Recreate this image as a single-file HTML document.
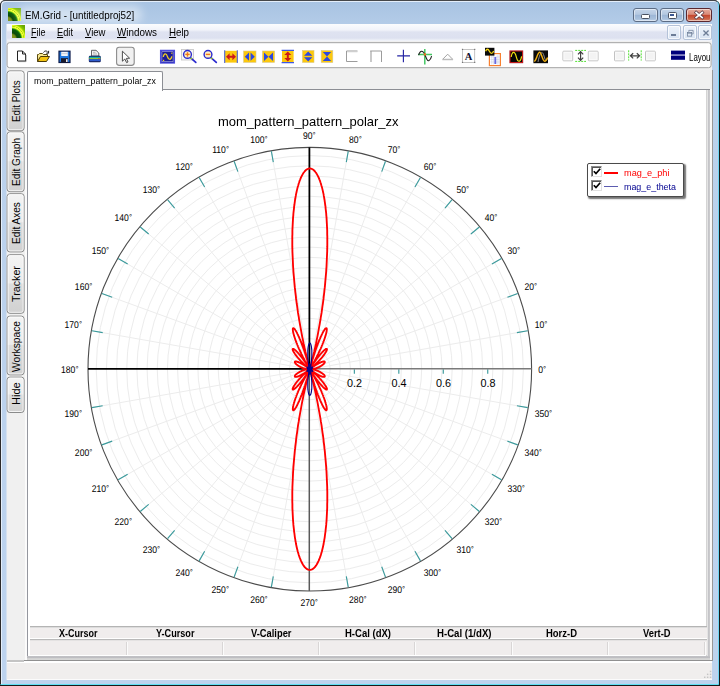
<!DOCTYPE html>
<html><head><meta charset="utf-8"><title>EM.Grid - [untitledproj52]</title>
<style>
html,body{margin:0;padding:0;}
body{width:720px;height:686px;overflow:hidden;background:#fff;font-family:"Liberation Sans",sans-serif;position:relative;}
.a{position:absolute;box-sizing:border-box;}
.t{position:absolute;white-space:nowrap;transform-origin:0 0;}
#winbg{position:absolute;left:0;top:0;width:720px;height:686px;border-radius:6px 6px 0 0;background:#1a1a1a;}
#win{position:absolute;left:0;top:0;width:717px;height:683px;border:1px solid #2c2a2a;border-top-color:#45474a;border-right-color:#6fd6f4;border-bottom-color:#5fe0f4;border-radius:5px 5px 1px 1px;
 background:linear-gradient(#a8c3e2 0px,#b4cce8 24px,#bad1ec 60px,#bdd3ee 100%);box-shadow:inset 1px 1px 0 0 #e4eefa;}
svg{position:absolute;overflow:visible;}
.vt{position:absolute;white-space:nowrap;transform-origin:0 0;font-size:10.5px;line-height:12px;color:#000;}
.sb{position:absolute;box-sizing:border-box;left:6px;width:18px;transform:translateX(0.6px);border:1px solid #8e8f8f;border-radius:3px;
 background:linear-gradient(#f3f3f3 0,#ececec 48%,#dedede 50%,#d2d2d2 100%);box-shadow:inset 0 0 0 1px rgba(255,255,255,.8);}
</style></head><body>
<div id="winbg"></div><div id="win"></div>

<div class="a" style="left:8px;top:8px;width:13px;height:13px;background:radial-gradient(17px circle at -4% 104%,#8a9a20 0,#7a8e18 24%,#0a4a0a 34%,#0c5a0c 53%,#2c9c10 58%,#dff820 64%,#f8ff44 69%,#a4dc00 72%,#f0ff34 76%,#d0f010 80%,#88c800 86%,#6aa800 100%);"></div>
<div class="a" style="left:18px;top:6px;width:124px;height:17px;border-radius:8px;background:rgba(255,255,255,.45);filter:blur(4px);"></div>
<span class="t" style="left:24.80px;top:9.04px;font-size:11px;line-height:12.639px;color:#000;transform:scaleX(0.8931);">EM.Grid - [untitledproj52]</span>
<div class="a" style="left:632.6px;top:7.8px;width:25px;height:13.8px;border:1px solid #5c6c84;border-radius:3px;background:linear-gradient(#c6d6ea 0,#b4c8e0 45%,#9cb6d6 50%,#a8c0dc 80%,#bcd0e8 100%);box-shadow:inset 0 0 0 1px rgba(255,255,255,.5);"></div>
<div class="a" style="left:659.8px;top:7.8px;width:24.6px;height:13.8px;border:1px solid #5c6c84;border-radius:3px;background:linear-gradient(#c6d6ea 0,#b4c8e0 45%,#9cb6d6 50%,#a8c0dc 80%,#bcd0e8 100%);box-shadow:inset 0 0 0 1px rgba(255,255,255,.5);"></div>
<div class="a" style="left:686.4px;top:7.8px;width:25.2px;height:13.8px;border:1px solid #5a2830;border-radius:3px;background:linear-gradient(#e6ac9e 0,#d98a78 45%,#c4442c 50%,#cc6448 80%,#d88468 100%);box-shadow:inset 0 0 0 1px rgba(255,255,255,.5);"></div>
<div class="a" style="left:640.5px;top:14.4px;width:9.6px;height:4.2px;background:#fff;border:1px solid #4a5262;border-radius:1.5px;"></div>
<div class="a" style="left:668px;top:11.5px;width:9px;height:7px;background:#fff;border:1px solid #4a5262;border-radius:1.5px;"></div>
<div class="a" style="left:670.4px;top:13.8px;width:3.8px;height:2.2px;background:#3c5a94;"></div>
<svg style="left:694px;top:10px" width="10" height="9" viewBox="0 0 10 9"><path d="M2.2 2.6 L8.2 7.6 M8.2 2.6 L2.2 7.6" stroke="#5a3b46" stroke-width="3.2" stroke-linecap="square"/><path d="M2.2 2.6 L8.2 7.6 M8.2 2.6 L2.2 7.6" stroke="#fff" stroke-width="1.8" stroke-linecap="square"/></svg>
<div class="a" style="left:6px;top:24px;width:1px;height:656px;background:#d6e1ef;"></div>
<div class="a" style="left:7px;top:24px;width:705px;height:656px;background:#f0f0f0;"></div>
<div class="a" style="left:7px;top:24px;width:705px;height:17px;background:linear-gradient(#fbfcfe 0,#f1f3fa 6px,#dfe3f1 8px,#dde1f0 14px,#eceff7 16px,#f4f6fb 17px);"></div>
<div class="a" style="left:12px;top:25px;width:13px;height:13px;background:radial-gradient(17px circle at -4% 104%,#8a9a20 0,#7a8e18 24%,#0a4a0a 34%,#0c5a0c 53%,#2c9c10 58%,#dff820 64%,#f8ff44 69%,#a4dc00 72%,#f0ff34 76%,#d0f010 80%,#88c800 86%,#6aa800 100%);"></div>
<span class="t" style="left:31.20px;top:26.05px;font-size:11px;line-height:12.639px;color:#000;transform:scaleX(0.8187);"><u>F</u>ile</span>
<span class="t" style="left:57.20px;top:26.05px;font-size:11px;line-height:12.639px;color:#000;transform:scaleX(0.8432);"><u>E</u>dit</span>
<span class="t" style="left:84.50px;top:26.05px;font-size:11px;line-height:12.639px;color:#000;transform:scaleX(0.8668);"><u>V</u>iew</span>
<span class="t" style="left:116.70px;top:26.05px;font-size:11px;line-height:12.639px;color:#000;transform:scaleX(0.8968);"><u>W</u>indows</span>
<span class="t" style="left:168.50px;top:26.05px;font-size:11px;line-height:12.639px;color:#000;transform:scaleX(0.8848);"><u>H</u>elp</span>
<div class="a" style="left:667.2px;top:25px;width:14.2px;height:14.8px;border:1px solid #b4c2d8;border-radius:2px;background:linear-gradient(#eef3fa,#d8e3f2);box-shadow:inset 0 0 0 1px rgba(255,255,255,.7);"></div>
<div class="a" style="left:683px;top:25px;width:13.8px;height:14.8px;border:1px solid #b4c2d8;border-radius:2px;background:linear-gradient(#eef3fa,#d8e3f2);box-shadow:inset 0 0 0 1px rgba(255,255,255,.7);"></div>
<div class="a" style="left:698px;top:25px;width:14.2px;height:14.8px;border:1px solid #b4c2d8;border-radius:2px;background:linear-gradient(#eef3fa,#d8e3f2);box-shadow:inset 0 0 0 1px rgba(255,255,255,.7);"></div>
<div class="a" style="left:671px;top:34px;width:5px;height:2px;background:#6c7c96;"></div>
<svg style="left:686.5px;top:29.5px" width="6.5" height="6.5" viewBox="0 0 9 9" fill="none" stroke="#6c7c96" stroke-width="1"><path d="M2.5 2.5V0.5H8.5V5.5H6.5"/><rect x="0.5" y="3.5" width="6" height="5"/><path d="M0.5 4.5H6.5"/></svg>
<svg style="left:702.5px;top:30px" width="6" height="6" viewBox="0 0 7 7"><path d="M0.5 0.5 L6.5 6.5 M6.5 0.5 L0.5 6.5" stroke="#6c7c96" stroke-width="1.5"/></svg>
<div class="a" style="left:6px;top:42px;width:705.4px;height:26.4px;background:#fff;border:1px solid #a2a2a2;border-radius:3px;transform:translate(0.6px,0.2px);"></div>
<svg style="left:0;top:0" width="720" height="80" viewBox="0 0 720 80">
<path d="M17.5 51 H22.5 L25.5 54 V61 H17.5 Z" fill="#fff" stroke="#222" stroke-width="1"/><path d="M22.5 51 V54 H25.5" fill="none" stroke="#222" stroke-width="1"/>
<path d="M18 61.6 H26 V55" fill="none" stroke="#777" stroke-width="0.8"/>
<path d="M37.5 61.5 V54.5 H38.5 L39.5 53.5 H42.5 L43.5 54.5 H47.5 V56.5" fill="#f8e890" stroke="#5a4a10" stroke-width="1"/>
<path d="M37.5 61.5 L40.5 56.5 H49.5 L46.5 61.5 Z" fill="#f4c410" stroke="#4a3a08" stroke-width="1"/>
<path d="M43.5 52.5 C44.5 50.5 47 50.5 48 52.5 M48.6 50.8 V53.2 H46.2" fill="none" stroke="#222" stroke-width="1"/>
<rect x="59" y="51.2" width="11" height="11.3" fill="#1e78e0" stroke="#0a1a4a" stroke-width="1.2"/>
<rect x="61.2" y="51.8" width="6.6" height="4.2" fill="#f2f4f8"/><path d="M61.2 53.6 H67.8" stroke="#b8c0d0" stroke-width="0.7"/>
<rect x="61" y="58.2" width="7" height="4.3" fill="#1a1a2a"/><rect x="66" y="59.2" width="1.6" height="2.8" fill="#e8e8f0"/>
<path d="M91.5 56 V50.3 H96 L98.8 53 V56 Z" fill="#f4f4f4" stroke="#555" stroke-width="0.9"/><path d="M93 52.3 H95.5 M93 54 H97" stroke="#999" stroke-width="0.7"/>
<rect x="88.8" y="55.8" width="12" height="6.4" rx="1.2" fill="#1a2a6a"/>
<rect x="89.3" y="56.8" width="11" height="1.6" fill="#18b0a8"/><rect x="89.3" y="58.2" width="11" height="1" fill="#b8e020"/><rect x="98.2" y="58.1" width="1.4" height="1.1" fill="#e05020"/>
<rect x="89.3" y="59.2" width="11" height="1.7" fill="#3060d8"/>
<rect x="116.6" y="47.2" width="17.6" height="18.2" rx="2.6" fill="#f1f1f1" stroke="#8b8b8b" stroke-width="1.1"/>
<path d="M122.4 51.2 V61.2 L124.8 59 L126.6 62.6 L128 61.9 L126.3 58.4 L129.6 58.2 Z" fill="#fff" stroke="#3a3a3a" stroke-width="0.9" stroke-linejoin="round"/>
<rect x="160.6" y="50.4" width="13.8" height="12.6" fill="#1c1c94" stroke="#4a4adc" stroke-width="1.3"/><rect x="161.9" y="51.7" width="11.2" height="10" fill="none" stroke="#b8b8ee" stroke-width="0.6"/>
<path d="M163.3 57 C164 53 166.3 53 167.5 56.7 C168.7 60.4 171 60.4 171.8 56.4" fill="none" stroke="#f0d020" stroke-width="1.3"/>
<rect x="171.2" y="52.6" width="1.2" height="1.2" fill="#f0d020"/><rect x="163" y="59.8" width="1.2" height="1.2" fill="#f0d020"/>
<rect x="181.4" y="49.4" width="12.2" height="10.6" fill="#f6f6f6" stroke="#c4c4c4" stroke-width="0.8"/>
<path d="M190.7 57.8 L195.8 62.4" stroke="#2a2ad0" stroke-width="1.7" stroke-linecap="round"/>
<path d="M190.3 57.4 L191.9 58.9" stroke="#a0d020" stroke-width="1.4"/>
<circle cx="187.5" cy="54.4" r="3.9" fill="#fff0c4" stroke="#2a2ad0" stroke-width="1.4"/>
<path d="M185.3 54.4 H189.7" stroke="#f07818" stroke-width="1.4"/>
<path d="M187.5 52.2 V56.6" stroke="#f07818" stroke-width="1.4"/>
<path d="M211.2 57.8 L216.3 62.4" stroke="#2a2ad0" stroke-width="1.7" stroke-linecap="round"/>
<path d="M210.8 57.4 L212.4 58.9" stroke="#a0d020" stroke-width="1.4"/>
<circle cx="208.0" cy="54.4" r="3.9" fill="#fff0c4" stroke="#2a2ad0" stroke-width="1.4"/>
<path d="M205.8 54.4 H210.2" stroke="#f07818" stroke-width="1.4"/>
<rect x="224.2" y="50.8" width="13.6" height="11.8" fill="#fcc80c"/><path d="M224.7 50.3 V63 M237.3 50.3 V63" stroke="#4a66ea" stroke-width="1.1"/>
<path d="M226 56.7 L229.6 53.2 V55.7 H232.4 V53.2 L236 56.7 L232.4 60.2 V57.7 H229.6 V60.2 Z" fill="#cc1818"/>
<rect x="243.6" y="51" width="12.4" height="11.4" fill="#fcc80c" stroke="#d8c890" stroke-width="0.6"/>
<path d="M244.8 56.7 L249 52.6 V60.8 Z M254.8 56.7 L250.6 52.6 V60.8 Z" fill="#2c48e0"/>
<rect x="262.4" y="51" width="12.2" height="11.4" fill="#fcc80c" stroke="#d8c890" stroke-width="0.6"/>
<path d="M264 52.4 L268.5 56.7 L264 61 Z M273 52.4 L268.5 56.7 L273 61 Z" fill="#2c48e0"/>
<rect x="282" y="50.4" width="11.6" height="12.2" fill="#fcc80c"/><path d="M281.6 50.4 H294 M281.6 62.6 H294" stroke="#3c58e6" stroke-width="1.1"/>
<path d="M287.8 51.4 L291.3 55 H288.8 V58 H291.3 L287.8 61.6 L284.3 58 H286.8 V55 H284.3 Z" fill="#cc1818"/>
<rect x="302.4" y="50.5" width="11.6" height="12" fill="#fcc80c" stroke="#d8c890" stroke-width="0.6"/>
<path d="M308.2 51.6 L312.4 55.7 H304 Z M308.2 61.4 L312.4 57.3 H304 Z" fill="#2c48e0"/>
<rect x="321.2" y="50.5" width="11.6" height="12" fill="#fcc80c" stroke="#d8c890" stroke-width="0.6"/>
<path d="M322.8 52 H331.2 L327 56.5 Z M322.8 61 H331.2 L327 56.5 Z" fill="#2c48e0"/>
<path d="M357.5 51 H346.5 V61.5 H357.5" fill="none" stroke="#9c9c9c" stroke-width="1"/><path d="M347 51.8 H357.5" stroke="#d0d0d0" stroke-width="0.8"/>
<path d="M371 62 V51" stroke="#c4c4c4" stroke-width="1.8"/><path d="M370.2 51 H381.5 V62" fill="none" stroke="#9c9c9c" stroke-width="1"/>
<path d="M403.4 49.8 V62.2 M397.2 55.9 H410" stroke="#2424a4" stroke-width="1.15"/>
<path d="M424.8 49 V64.4 M418 54.4 H432" stroke="#44c864" stroke-width="1.5"/>
<path d="M418.6 55.2 C420 50 423 50 424.8 54.4 C426.5 58.8 427.5 61.4 429 60.6 C430.4 59.8 431.2 57.8 431.6 56.2" fill="none" stroke="#222" stroke-width="1.1"/>
<rect x="423.8" y="53.3" width="2.2" height="2.2" fill="#f07820"/>
<path d="M442.8 59.2 L447.7 54.2 L452.6 59.2" fill="none" stroke="#a4a4a4" stroke-width="1"/><path d="M442.4 59.5 H453" stroke="#bcbcbc" stroke-width="1.5"/>
<rect x="462.5" y="49.4" width="12.2" height="13" fill="#fff" stroke="#b4b4b4" stroke-width="0.8"/>
<rect x="461.9" y="48.8" width="1.2" height="1.2" fill="#777"/>
<rect x="474.09999999999997" y="48.8" width="1.2" height="1.2" fill="#777"/>
<rect x="461.9" y="61.8" width="1.2" height="1.2" fill="#777"/>
<rect x="474.09999999999997" y="61.8" width="1.2" height="1.2" fill="#777"/>
<text x="468.6" y="60" font-family="Liberation Serif, serif" font-weight="bold" font-size="10.5" text-anchor="middle" fill="#101030">A</text>
<rect x="489.4" y="53.6" width="11" height="12" fill="#fff" stroke="#f88030" stroke-width="1.2"/>
<path d="M491.8 55 V64.5 M493.6 55 V64.5 M497.2 55 V64.5 M499 55 V64.5 M490.5 57 H500 M490.5 59.5 H500 M490.5 62 H500" stroke="#d0d4e8" stroke-width="0.7"/>
<rect x="494.4" y="57" width="1.8" height="7" fill="#6868e0"/>
<rect x="485" y="47.8" width="9.4" height="7.8" fill="#0a0a0a"/>
<path d="M485.6 51.2 C486.6 48.6 488.2 48.6 489.4 51.2 C490.6 53.8 492.4 54.4 493.6 51" fill="none" stroke="#f0d010" stroke-width="1.3"/>
<rect x="509.3" y="50.3" width="14" height="13" fill="#c8dcec"/><rect x="510" y="51" width="12.6" height="11.6" fill="#050505" stroke="#c81818" stroke-width="1.1"/>
<path d="M511.2 57 C512.2 50.8 514.8 50.8 516.3 56.8 C517.8 62.8 520.4 62.8 521.6 56.4" fill="none" stroke="#f0e010" stroke-width="1.2"/>
<rect x="533.4" y="50.4" width="14.6" height="12.8" fill="#0a0a0a"/>
<path d="M538 62 C540 52 542.5 50 544 56 C545.5 62 546.8 61 547.6 58" fill="none" stroke="#8c8c8c" stroke-width="1"/>
<path d="M534.2 61.4 C536.6 60 537.6 52.2 539.6 52.2 C541.6 52.2 542.4 61.2 544.6 61.2 C546 61.2 547 59 547.6 57.4" fill="none" stroke="#f0b010" stroke-width="1.4"/>
<rect x="562.9" y="51.2" width="9.8" height="9.6" rx="0.8" fill="#f3f3f3" stroke="#c2c2c2" stroke-width="1"/><rect x="564.0" y="52.3" width="7.6" height="7.4" fill="none" stroke="#fafafa" stroke-width="1"/>
<rect x="588.3" y="51.2" width="9.8" height="9.6" rx="0.8" fill="#f3f3f3" stroke="#c2c2c2" stroke-width="1"/><rect x="589.4" y="52.3" width="7.6" height="7.4" fill="none" stroke="#fafafa" stroke-width="1"/>
<rect x="614.5" y="51.2" width="9.8" height="9.6" rx="0.8" fill="#f3f3f3" stroke="#c2c2c2" stroke-width="1"/><rect x="615.6" y="52.3" width="7.6" height="7.4" fill="none" stroke="#fafafa" stroke-width="1"/>
<rect x="645.5" y="51.2" width="9.8" height="9.6" rx="0.8" fill="#f3f3f3" stroke="#c2c2c2" stroke-width="1"/><rect x="646.6" y="52.3" width="7.6" height="7.4" fill="none" stroke="#fafafa" stroke-width="1"/>
<path d="M575.2 50.4 H586 M575.2 61.4 H586" stroke="#50e030" stroke-width="1" stroke-dasharray="2 1"/>
<path d="M580.6 52 V60 M578 54.4 L580.6 51.6 L583.2 54.4 M578 57.6 L580.6 60.4 L583.2 57.6" fill="none" stroke="#404040" stroke-width="1.2"/>
<path d="M628.7 50.3 V60.6 M641.2 50.3 V60.6" stroke="#50e030" stroke-width="1" stroke-dasharray="2 1"/>
<path d="M630.6 55.8 H639.4 M633.2 53.2 L630.4 55.8 L633.2 58.4 M636.8 53.2 L639.6 55.8 L636.8 58.4" fill="none" stroke="#404040" stroke-width="1.2"/>
<rect x="671" y="50.6" width="14" height="9.2" fill="#00007c"/><rect x="671" y="54.2" width="14" height="1" fill="#8888c8"/><rect x="671" y="55.2" width="14" height="0.6" fill="#d0d0ec"/>
</svg>
<div class="a" style="left:686px;top:46px;width:24.2px;height:20px;overflow:hidden;"><span class="t" style="left:2.90px;top:4.74px;font-size:11px;line-height:12.639px;color:#000;transform:scaleX(0.7165);">Layout</span></div>
<svg style="left:0;top:0" width="0" height="0"><defs><linearGradient id="sbg" x1="0" y1="0" x2="0" y2="1"><stop offset="0" stop-color="#f3f3f3"/><stop offset="0.48" stop-color="#ebebeb"/><stop offset="0.5" stop-color="#dddddd"/><stop offset="1" stop-color="#d1d1d1"/></linearGradient></defs></svg>
<svg style="left:0;top:0" width="30" height="420"><rect x="7.1" y="70.9" width="17" height="59.8" rx="2.8" fill="url(#sbg)" stroke="#8a8b8b" stroke-width="1"/><rect x="8.1" y="71.9" width="15" height="57.8" rx="2" fill="none" stroke="rgba(255,255,255,.75)" stroke-width="1"/></svg>
<span class="vt" style="left:10.10px;top:122.20px;transform:rotate(-90deg) scaleX(0.9377);">Edit Plots</span>
<svg style="left:0;top:0" width="30" height="420"><rect x="7.1" y="131.9" width="17" height="59.8" rx="2.8" fill="url(#sbg)" stroke="#8a8b8b" stroke-width="1"/><rect x="8.1" y="132.9" width="15" height="57.8" rx="2" fill="none" stroke="rgba(255,255,255,.75)" stroke-width="1"/></svg>
<span class="vt" style="left:10.10px;top:185.80px;transform:rotate(-90deg) scaleX(0.9564);">Edit Graph</span>
<svg style="left:0;top:0" width="30" height="420"><rect x="7.1" y="193.7" width="17" height="58.2" rx="2.8" fill="url(#sbg)" stroke="#8a8b8b" stroke-width="1"/><rect x="8.1" y="194.7" width="15" height="56.2" rx="2" fill="none" stroke="rgba(255,255,255,.75)" stroke-width="1"/></svg>
<span class="vt" style="left:10.10px;top:243.80px;transform:rotate(-90deg) scaleX(0.9547);">Edit Axes</span>
<svg style="left:0;top:0" width="30" height="420"><rect x="7.1" y="254.7" width="17" height="58.6" rx="2.8" fill="url(#sbg)" stroke="#8a8b8b" stroke-width="1"/><rect x="8.1" y="255.7" width="15" height="56.6" rx="2" fill="none" stroke="rgba(255,255,255,.75)" stroke-width="1"/></svg>
<span class="vt" style="left:10.10px;top:302.10px;transform:rotate(-90deg) scaleX(1.0206);">Tracker</span>
<svg style="left:0;top:0" width="30" height="420"><rect x="7.1" y="316.1" width="17" height="58.8" rx="2.8" fill="url(#sbg)" stroke="#8a8b8b" stroke-width="1"/><rect x="8.1" y="317.1" width="15" height="56.8" rx="2" fill="none" stroke="rgba(255,255,255,.75)" stroke-width="1"/></svg>
<span class="vt" style="left:10.10px;top:372.40px;transform:rotate(-90deg) scaleX(0.9744);">Workspace</span>
<svg style="left:0;top:0" width="30" height="420"><rect x="7.1" y="377.1" width="17" height="35.4" rx="2.8" fill="url(#sbg)" stroke="#8a8b8b" stroke-width="1"/><rect x="8.1" y="378.1" width="15" height="33.4" rx="2" fill="none" stroke="rgba(255,255,255,.75)" stroke-width="1"/></svg>
<span class="vt" style="left:10.10px;top:405.40px;transform:rotate(-90deg) scaleX(1.0474);">Hide</span>
<div class="a" style="left:24.5px;top:71px;width:2.5px;height:589px;background:#fbfbfb;"></div>
<div class="a" style="left:27px;top:89px;width:683px;height:571px;background:#fff;border-left:1px solid #94969e;border-top:1px solid #8c8e94;"></div>
<div class="a" style="left:706px;top:90px;width:4px;height:570px;background:linear-gradient(90deg,#d4d4d4 0,#d4d4d4 25%,#e4e4e4 25%,#e4e4e4 50%,#c4c4c8 50%,#c4c4c8 75%,#cacacc 75%);"></div>
<div class="a" style="left:710px;top:89px;width:2px;height:571px;background:#f8f8f8;"></div>
<div class="a" style="left:712px;top:70px;width:1px;height:591px;background:#989898;"></div>
<div class="a" style="left:27px;top:656px;width:683px;height:4px;background:linear-gradient(#c2c2c6 0,#bcbcc0 50%,#d0d0d0 50%,#d8d8d8 100%);"></div>
<div class="a" style="left:27px;top:71px;width:136px;height:20px;background:#fff;border:1px solid #8c8e94;border-bottom:none;border-radius:2px 2px 0 0;"></div>
<span class="t" style="left:33.75px;top:74.82px;font-size:9.7px;line-height:11.145px;color:#000;transform:scaleX(0.9052);">mom_pattern_pattern_polar_zx</span>
<div class="a" style="left:30px;top:626px;width:677px;height:28.5px;background:#f0eded;"></div>
<div class="a" style="left:30px;top:626px;width:677px;height:2px;background:linear-gradient(#b4b4b4 0,#b4b4b4 50%,#dcdcdc 50%);"></div>
<div class="a" style="left:30px;top:638px;width:677px;height:3px;background:linear-gradient(#fff 0,#fff 33%,#b9b9b9 33%,#b9b9b9 66%,#e4e2e2 66%);"></div>
<span class="t" style="left:59.00px;top:627.10px;font-size:10.5px;line-height:12.065px;color:#000;font-weight:bold;transform:scaleX(0.8567);">X-Cursor</span>
<span class="t" style="left:156.00px;top:627.10px;font-size:10.5px;line-height:12.065px;color:#000;font-weight:bold;transform:scaleX(0.8679);">Y-Cursor</span>
<span class="t" style="left:251.00px;top:627.10px;font-size:10.5px;line-height:12.065px;color:#000;font-weight:bold;transform:scaleX(0.8898);">V-Caliper</span>
<span class="t" style="left:345.00px;top:627.10px;font-size:10.5px;line-height:12.065px;color:#000;font-weight:bold;transform:scaleX(0.9061);">H-Cal (dX)</span>
<span class="t" style="left:437.00px;top:627.10px;font-size:10.5px;line-height:12.065px;color:#000;font-weight:bold;transform:scaleX(0.9162);">H-Cal (1/dX)</span>
<span class="t" style="left:545.50px;top:627.10px;font-size:10.5px;line-height:12.065px;color:#000;font-weight:bold;transform:scaleX(0.9015);">Horz-D</span>
<span class="t" style="left:643.00px;top:627.10px;font-size:10.5px;line-height:12.065px;color:#000;font-weight:bold;transform:scaleX(0.8893);">Vert-D</span>
<div class="a" style="left:126px;top:642px;width:2px;height:13px;background:linear-gradient(90deg,#d9d6d6 50%,#fbfbfb 50%);"></div>
<div class="a" style="left:222px;top:642px;width:2px;height:13px;background:linear-gradient(90deg,#d9d6d6 50%,#fbfbfb 50%);"></div>
<div class="a" style="left:318px;top:642px;width:2px;height:13px;background:linear-gradient(90deg,#d9d6d6 50%,#fbfbfb 50%);"></div>
<div class="a" style="left:414px;top:642px;width:2px;height:13px;background:linear-gradient(90deg,#d9d6d6 50%,#fbfbfb 50%);"></div>
<div class="a" style="left:511px;top:642px;width:2px;height:13px;background:linear-gradient(90deg,#d9d6d6 50%,#fbfbfb 50%);"></div>
<div class="a" style="left:607px;top:642px;width:2px;height:13px;background:linear-gradient(90deg,#d9d6d6 50%,#fbfbfb 50%);"></div>
<div class="a" style="left:704px;top:642px;width:2px;height:13px;background:linear-gradient(90deg,#d9d6d6 50%,#fbfbfb 50%);"></div>
<div class="a" style="left:7px;top:660px;width:705px;height:20px;background:#f0eeed;border-top:1px solid #909090;box-shadow:inset 0 2px 0 #fff,inset 0 -1px 0 #fbfbfb;"></div><div class="a" style="left:7px;top:660px;width:17px;height:1.5px;background:#c4c4c4;"></div>
<svg style="left:704px;top:670px" width="8" height="8" viewBox="0 0 11 11" fill="#c4c4c4"><rect x="8" y="1" width="2" height="2"/><rect x="4" y="5" width="2" height="2"/><rect x="8" y="5" width="2" height="2"/><rect x="0" y="9" width="2" height="2"/><rect x="4" y="9" width="2" height="2"/><rect x="8" y="9" width="2" height="2"/></svg>
<svg style="left:0;top:0" width="720" height="686" viewBox="0 0 720 686" font-family="Liberation Sans, sans-serif">
<g fill="none" stroke="#ececec" stroke-width="1">
<circle cx="309.8" cy="369.2" r="10.17"/>
<circle cx="309.8" cy="369.2" r="20.34"/>
<circle cx="309.8" cy="369.2" r="30.51"/>
<circle cx="309.8" cy="369.2" r="40.68"/>
<circle cx="309.8" cy="369.2" r="50.85"/>
<circle cx="309.8" cy="369.2" r="61.02"/>
<circle cx="309.8" cy="369.2" r="71.19"/>
<circle cx="309.8" cy="369.2" r="81.36"/>
<circle cx="309.8" cy="369.2" r="91.53"/>
<circle cx="309.8" cy="369.2" r="101.70"/>
<circle cx="309.8" cy="369.2" r="111.87"/>
<circle cx="309.8" cy="369.2" r="122.04"/>
<circle cx="309.8" cy="369.2" r="132.21"/>
<circle cx="309.8" cy="369.2" r="142.38"/>
<circle cx="309.8" cy="369.2" r="152.55"/>
<circle cx="309.8" cy="369.2" r="162.72"/>
<circle cx="309.8" cy="369.2" r="172.89"/>
<circle cx="309.8" cy="369.2" r="183.06"/>
<circle cx="309.8" cy="369.2" r="193.23"/>
<circle cx="309.8" cy="369.2" r="203.40"/>
<circle cx="309.8" cy="369.2" r="213.57"/>
<line x1="309.8" y1="369.2" x2="528.23" y2="330.68"/>
<line x1="309.8" y1="369.2" x2="518.22" y2="293.34"/>
<line x1="309.8" y1="369.2" x2="501.88" y2="258.30"/>
<line x1="309.8" y1="369.2" x2="479.71" y2="226.63"/>
<line x1="309.8" y1="369.2" x2="452.37" y2="199.29"/>
<line x1="309.8" y1="369.2" x2="420.70" y2="177.12"/>
<line x1="309.8" y1="369.2" x2="385.66" y2="160.78"/>
<line x1="309.8" y1="369.2" x2="348.32" y2="150.77"/>
<line x1="309.8" y1="369.2" x2="271.28" y2="150.77"/>
<line x1="309.8" y1="369.2" x2="233.94" y2="160.78"/>
<line x1="309.8" y1="369.2" x2="198.90" y2="177.12"/>
<line x1="309.8" y1="369.2" x2="167.23" y2="199.29"/>
<line x1="309.8" y1="369.2" x2="139.89" y2="226.63"/>
<line x1="309.8" y1="369.2" x2="117.72" y2="258.30"/>
<line x1="309.8" y1="369.2" x2="101.38" y2="293.34"/>
<line x1="309.8" y1="369.2" x2="91.37" y2="330.68"/>
<line x1="309.8" y1="369.2" x2="91.37" y2="407.72"/>
<line x1="309.8" y1="369.2" x2="101.38" y2="445.06"/>
<line x1="309.8" y1="369.2" x2="117.72" y2="480.10"/>
<line x1="309.8" y1="369.2" x2="139.89" y2="511.77"/>
<line x1="309.8" y1="369.2" x2="167.23" y2="539.11"/>
<line x1="309.8" y1="369.2" x2="198.90" y2="561.28"/>
<line x1="309.8" y1="369.2" x2="233.94" y2="577.62"/>
<line x1="309.8" y1="369.2" x2="271.28" y2="587.63"/>
<line x1="309.8" y1="369.2" x2="348.32" y2="587.63"/>
<line x1="309.8" y1="369.2" x2="385.66" y2="577.62"/>
<line x1="309.8" y1="369.2" x2="420.70" y2="561.28"/>
<line x1="309.8" y1="369.2" x2="452.37" y2="539.11"/>
<line x1="309.8" y1="369.2" x2="479.71" y2="511.77"/>
<line x1="309.8" y1="369.2" x2="501.88" y2="480.10"/>
<line x1="309.8" y1="369.2" x2="518.22" y2="445.06"/>
<line x1="309.8" y1="369.2" x2="528.23" y2="407.72"/>
</g>
<circle cx="309.8" cy="369.2" r="221.8" fill="none" stroke="#4c4c4c" stroke-width="1.1"/>
<g stroke="#3a9a9c" stroke-width="1.15">
<line x1="516.91" y1="332.68" x2="527.74" y2="330.77"/>
<line x1="507.42" y1="297.27" x2="517.75" y2="293.51"/>
<line x1="491.93" y1="264.05" x2="501.45" y2="258.55"/>
<line x1="470.90" y1="234.02" x2="479.33" y2="226.95"/>
<line x1="444.98" y1="208.10" x2="452.05" y2="199.67"/>
<line x1="414.95" y1="187.07" x2="420.45" y2="177.55"/>
<line x1="381.73" y1="171.58" x2="385.49" y2="161.25"/>
<line x1="346.32" y1="162.09" x2="348.23" y2="151.26"/>
<line x1="273.28" y1="162.09" x2="271.37" y2="151.26"/>
<line x1="237.87" y1="171.58" x2="234.11" y2="161.25"/>
<line x1="204.65" y1="187.07" x2="199.15" y2="177.55"/>
<line x1="174.62" y1="208.10" x2="167.55" y2="199.67"/>
<line x1="148.70" y1="234.02" x2="140.27" y2="226.95"/>
<line x1="127.67" y1="264.05" x2="118.15" y2="258.55"/>
<line x1="112.18" y1="297.27" x2="101.85" y2="293.51"/>
<line x1="102.69" y1="332.68" x2="91.86" y2="330.77"/>
<line x1="102.69" y1="405.72" x2="91.86" y2="407.63"/>
<line x1="112.18" y1="441.13" x2="101.85" y2="444.89"/>
<line x1="127.67" y1="474.35" x2="118.15" y2="479.85"/>
<line x1="148.70" y1="504.38" x2="140.27" y2="511.45"/>
<line x1="174.62" y1="530.30" x2="167.55" y2="538.73"/>
<line x1="204.65" y1="551.33" x2="199.15" y2="560.85"/>
<line x1="237.87" y1="566.82" x2="234.11" y2="577.15"/>
<line x1="273.28" y1="576.31" x2="271.37" y2="587.14"/>
<line x1="346.32" y1="576.31" x2="348.23" y2="587.14"/>
<line x1="381.73" y1="566.82" x2="385.49" y2="577.15"/>
<line x1="414.95" y1="551.33" x2="420.45" y2="560.85"/>
<line x1="444.98" y1="530.30" x2="452.05" y2="538.73"/>
<line x1="470.90" y1="504.38" x2="479.33" y2="511.45"/>
<line x1="491.93" y1="474.35" x2="501.45" y2="479.85"/>
<line x1="507.42" y1="441.13" x2="517.75" y2="444.89"/>
<line x1="516.91" y1="405.72" x2="527.74" y2="407.63"/>
<line x1="354.36" y1="369.2" x2="354.36" y2="373.7"/>
<line x1="398.82" y1="369.2" x2="398.82" y2="373.7"/>
<line x1="443.28" y1="369.2" x2="443.28" y2="373.7"/>
<line x1="487.74" y1="369.2" x2="487.74" y2="373.7"/>
</g>
<line x1="309.8" y1="368.75" x2="531.6" y2="368.75" stroke="#7a7a7a" stroke-width="1.6"/>
<line x1="309.3" y1="369.2" x2="309.3" y2="591.0" stroke="#5a5a5a" stroke-width="1.5"/>
<line x1="88.0" y1="368.8" x2="309.8" y2="368.8" stroke="#000" stroke-width="1.8"/>
<line x1="309.40000000000003" y1="147.39999999999998" x2="309.40000000000003" y2="369.2" stroke="#000" stroke-width="1.8"/>
<polyline fill="none" stroke="#ff0000" stroke-width="1.85" stroke-linejoin="round" points="309.8,369.2 310.4,369.2 310.7,369.2 310.9,369.2 311.0,369.2 311.2,369.2 311.3,369.2 311.4,369.2 311.5,369.2 311.7,369.2 311.8,369.2 311.9,369.2 312.0,369.1 312.0,369.1 312.1,369.1 312.2,369.1 312.3,369.1 312.4,369.1 312.5,369.1 312.5,369.1 312.6,369.1 312.7,369.1 312.8,369.1 312.8,369.0 312.9,369.0 313.0,369.0 313.0,369.0 313.1,369.0 313.2,369.0 313.2,369.0 313.3,369.0 313.4,369.0 313.4,368.9 313.5,368.9 313.6,368.9 313.6,368.9 313.7,368.9 313.8,368.9 313.8,368.9 313.9,368.8 314.0,368.8 314.0,368.8 314.1,368.8 314.2,368.8 314.2,368.8 314.3,368.8 314.4,368.7 314.4,368.7 314.5,368.7 314.6,368.7 314.6,368.7 314.7,368.7 314.8,368.6 314.8,368.6 314.9,368.6 315.0,368.6 315.0,368.6 315.1,368.5 315.2,368.5 315.2,368.5 315.3,368.5 315.4,368.5 315.4,368.4 315.5,368.4 315.6,368.4 315.6,368.4 315.7,368.3 315.8,368.3 315.9,368.3 315.9,368.3 316.0,368.2 316.1,368.2 316.1,368.2 316.2,368.2 316.3,368.1 316.4,368.1 316.4,368.1 316.5,368.1 316.6,368.0 316.7,368.0 316.7,368.0 316.8,367.9 316.9,367.9 317.0,367.9 317.0,367.9 317.1,367.8 317.2,367.8 317.3,367.8 317.4,367.7 317.4,367.7 317.5,367.7 317.6,367.6 317.7,367.6 317.7,367.6 317.8,367.5 317.9,367.5 318.0,367.5 318.1,367.4 318.2,367.4 318.2,367.3 318.3,367.3 318.4,367.3 318.5,367.2 318.6,367.2 318.6,367.2 318.7,367.1 318.8,367.1 318.9,367.0 319.0,367.0 319.1,367.0 319.1,366.9 319.2,366.9 319.3,366.8 319.4,366.8 319.5,366.7 319.6,366.7 319.7,366.7 319.7,366.6 319.8,366.6 319.9,366.5 320.0,366.5 320.1,366.4 320.2,366.4 320.2,366.3 320.3,366.3 320.4,366.2 320.5,366.2 320.6,366.1 320.7,366.1 320.8,366.0 320.8,366.0 320.9,365.9 321.0,365.9 321.1,365.8 321.2,365.8 321.3,365.7 321.3,365.7 321.4,365.6 321.5,365.6 321.6,365.5 321.7,365.5 321.7,365.4 321.8,365.4 321.9,365.3 322.0,365.2 322.1,365.2 322.1,365.1 322.2,365.1 322.3,365.0 322.4,365.0 322.4,364.9 322.5,364.9 322.6,364.8 322.7,364.7 322.7,364.7 322.8,364.6 322.9,364.6 323.0,364.5 323.0,364.4 323.1,364.4 323.2,364.3 323.2,364.3 323.3,364.2 323.4,364.2 323.4,364.1 323.5,364.0 323.6,364.0 323.6,363.9 323.7,363.9 323.7,363.8 323.8,363.8 323.9,363.7 323.9,363.6 324.0,363.6 324.0,363.5 324.1,363.5 324.1,363.4 324.2,363.4 324.2,363.3 324.3,363.2 324.3,363.2 324.3,363.1 324.4,363.1 324.4,363.0 324.5,363.0 324.5,362.9 324.5,362.9 324.6,362.8 324.6,362.8 324.6,362.7 324.7,362.7 324.7,362.6 324.7,362.6 324.7,362.5 324.8,362.5 324.8,362.4 324.8,362.4 324.8,362.3 324.8,362.3 324.8,362.2 324.8,362.2 324.8,362.2 324.8,362.1 324.8,362.1 324.8,362.0 324.8,362.0 324.8,362.0 324.8,361.9 324.8,361.9 324.8,361.8 324.8,361.8 324.8,361.8 324.7,361.8 324.7,361.7 324.7,361.7 324.7,361.7 324.6,361.6 324.6,361.6 324.6,361.6 324.5,361.6 324.5,361.6 324.4,361.5 324.4,361.5 324.3,361.5 324.3,361.5 324.2,361.5 324.2,361.5 324.1,361.5 324.0,361.5 324.0,361.5 323.9,361.5 323.8,361.5 323.8,361.5 323.7,361.5 323.6,361.5 323.5,361.5 323.4,361.5 323.3,361.5 323.2,361.5 323.1,361.5 323.0,361.6 322.9,361.6 322.8,361.6 322.7,361.6 322.6,361.7 322.5,361.7 322.4,361.7 322.2,361.8 322.1,361.8 322.0,361.8 321.9,361.9 321.7,361.9 321.6,362.0 321.4,362.0 321.3,362.1 321.1,362.1 321.0,362.2 320.8,362.3 320.7,362.3 320.5,362.4 320.4,362.5 320.2,362.5 320.0,362.6 319.9,362.7 319.7,362.8 319.5,362.9 319.3,363.0 319.1,363.1 318.9,363.1 318.8,363.2 318.6,363.3 318.4,363.4 318.2,363.6 318.0,363.7 317.8,363.8 317.6,363.9 317.3,364.0 317.1,364.1 316.9,364.3 316.7,364.4 316.5,364.5 316.3,364.7 316.0,364.8 315.8,364.9 315.6,365.1 315.3,365.2 315.1,365.4 314.9,365.5 314.6,365.7 314.4,365.9 314.1,366.0 313.9,366.2 313.6,366.4 313.4,366.5 313.1,366.7 312.9,366.9 312.6,367.1 312.4,367.3 312.1,367.5 311.8,367.6 311.6,367.8 311.3,368.0 311.0,368.2 310.8,368.4 310.5,368.7 310.2,368.9 310.0,369.1 309.9,369.1 310.2,368.9 310.5,368.7 310.7,368.4 311.0,368.2 311.3,368.0 311.6,367.8 311.8,367.5 312.1,367.3 312.4,367.1 312.7,366.8 313.0,366.6 313.2,366.3 313.5,366.1 313.8,365.8 314.1,365.6 314.4,365.3 314.6,365.1 314.9,364.8 315.2,364.6 315.5,364.3 315.7,364.0 316.0,363.8 316.3,363.5 316.6,363.2 316.8,363.0 317.1,362.7 317.4,362.4 317.6,362.2 317.9,361.9 318.2,361.6 318.4,361.4 318.7,361.1 318.9,360.8 319.2,360.6 319.4,360.3 319.7,360.0 319.9,359.7 320.2,359.5 320.4,359.2 320.7,358.9 320.9,358.7 321.1,358.4 321.4,358.1 321.6,357.8 321.8,357.6 322.1,357.3 322.3,357.1 322.5,356.8 322.7,356.5 322.9,356.3 323.1,356.0 323.3,355.8 323.5,355.5 323.7,355.3 323.9,355.0 324.1,354.8 324.2,354.5 324.4,354.3 324.6,354.0 324.7,353.8 324.9,353.6 325.0,353.4 325.2,353.1 325.3,352.9 325.5,352.7 325.6,352.5 325.7,352.3 325.8,352.1 326.0,351.9 326.1,351.7 326.2,351.5 326.3,351.3 326.4,351.1 326.4,351.0 326.5,350.8 326.6,350.6 326.7,350.5 326.7,350.3 326.8,350.2 326.8,350.1 326.9,349.9 326.9,349.8 326.9,349.7 326.9,349.6 327.0,349.5 327.0,349.4 327.0,349.3 327.0,349.2 326.9,349.1 326.9,349.1 326.9,349.0 326.9,349.0 326.8,348.9 326.8,348.9 326.7,348.9 326.7,348.8 326.6,348.8 326.5,348.8 326.4,348.9 326.3,348.9 326.2,348.9 326.1,348.9 326.0,349.0 325.9,349.0 325.8,349.1 325.6,349.2 325.5,349.3 325.4,349.4 325.2,349.5 325.0,349.6 324.9,349.7 324.7,349.9 324.5,350.0 324.3,350.2 324.1,350.3 323.9,350.5 323.7,350.7 323.5,350.9 323.3,351.1 323.1,351.3 322.8,351.6 322.6,351.8 322.4,352.1 322.1,352.3 321.9,352.6 321.6,352.9 321.3,353.2 321.0,353.5 320.8,353.8 320.5,354.2 320.2,354.5 319.9,354.8 319.6,355.2 319.3,355.6 319.0,356.0 318.7,356.4 318.3,356.8 318.0,357.2 317.7,357.6 317.4,358.0 317.0,358.5 316.7,358.9 316.3,359.4 316.0,359.9 315.6,360.4 315.3,360.9 314.9,361.4 314.6,361.9 314.2,362.4 313.8,362.9 313.5,363.5 313.1,364.0 312.7,364.6 312.4,365.2 312.0,365.7 311.6,366.3 311.2,366.9 310.8,367.5 310.5,368.1 310.1,368.8 309.9,369.0 310.3,368.4 310.7,367.8 311.1,367.1 311.4,366.5 311.8,365.8 312.2,365.2 312.6,364.5 313.0,363.8 313.3,363.2 313.7,362.5 314.1,361.8 314.5,361.1 314.8,360.4 315.2,359.7 315.6,359.0 315.9,358.3 316.3,357.6 316.7,356.9 317.0,356.2 317.4,355.5 317.7,354.8 318.1,354.1 318.4,353.4 318.7,352.7 319.1,352.0 319.4,351.3 319.7,350.6 320.0,349.9 320.4,349.2 320.7,348.6 321.0,347.9 321.3,347.2 321.6,346.5 321.8,345.8 322.1,345.2 322.4,344.5 322.6,343.9 322.9,343.2 323.2,342.6 323.4,341.9 323.6,341.3 323.9,340.7 324.1,340.1 324.3,339.5 324.5,338.9 324.7,338.3 324.9,337.7 325.1,337.2 325.2,336.6 325.4,336.1 325.6,335.6 325.7,335.1 325.8,334.6 326.0,334.1 326.1,333.7 326.2,333.2 326.3,332.8 326.4,332.4 326.5,332.0 326.6,331.6 326.6,331.2 326.7,330.9 326.7,330.5 326.7,330.2 326.8,329.9 326.8,329.7 326.8,329.4 326.8,329.2 326.8,329.0 326.7,328.8 326.7,328.6 326.7,328.5 326.6,328.4 326.5,328.3 326.5,328.2 326.4,328.1 326.3,328.1 326.2,328.1 326.1,328.1 326.0,328.2 325.8,328.3 325.7,328.4 325.5,328.5 325.4,328.7 325.2,328.8 325.0,329.0 324.8,329.3 324.6,329.5 324.4,329.8 324.2,330.2 324.0,330.5 323.7,330.9 323.5,331.3 323.2,331.7 323.0,332.2 322.7,332.7 322.4,333.2 322.2,333.8 321.9,334.4 321.6,335.0 321.3,335.7 320.9,336.4 320.6,337.1 320.3,337.8 320.0,338.6 319.6,339.4 319.3,340.2 318.9,341.1 318.6,342.0 318.2,342.9 317.8,343.9 317.5,344.9 317.1,345.9 316.7,347.0 316.3,348.1 315.9,349.2 315.5,350.3 315.1,351.5 314.7,352.7 314.3,354.0 313.9,355.3 313.5,356.6 313.1,357.9 312.6,359.3 312.2,360.7 311.8,362.1 311.4,363.5 311.0,365.0 310.5,366.5 310.1,368.1 309.9,368.7 310.4,366.9 310.9,365.1 311.4,363.3 311.8,361.4 312.3,359.5 312.8,357.6 313.2,355.6 313.7,353.7 314.2,351.7 314.6,349.7 315.1,347.6 315.5,345.6 316.0,343.5 316.4,341.4 316.8,339.3 317.3,337.1 317.7,335.0 318.1,332.8 318.5,330.6 318.9,328.4 319.3,326.2 319.7,324.0 320.1,321.7 320.5,319.5 320.8,317.2 321.2,315.0 321.6,312.7 321.9,310.4 322.2,308.1 322.5,305.8 322.9,303.5 323.2,301.2 323.5,298.9 323.7,296.6 324.0,294.3 324.3,292.0 324.5,289.7 324.8,287.4 325.0,285.1 325.2,282.8 325.4,280.5 325.6,278.2 325.8,275.9 326.0,273.6 326.2,271.3 326.3,269.0 326.5,266.8 326.6,264.5 326.7,262.3 326.8,260.0 326.9,257.8 327.0,255.6 327.1,253.4 327.2,251.2 327.2,249.1 327.3,246.9 327.3,244.8 327.3,242.7 327.3,240.6 327.3,238.5 327.3,236.4 327.2,234.4 327.2,232.4 327.2,230.4 327.1,228.4 327.0,226.5 326.9,224.5 326.8,222.6 326.7,220.7 326.6,218.9 326.5,217.1 326.3,215.3 326.2,213.5 326.0,211.7 325.8,210.0 325.6,208.3 325.5,206.7 325.2,205.0 325.0,203.4 324.8,201.8 324.6,200.3 324.3,198.8 324.1,197.3 323.8,195.9 323.6,194.4 323.3,193.1 323.0,191.7 322.7,190.4 322.4,189.1 322.1,187.9 321.8,186.7 321.4,185.5 321.1,184.4 320.8,183.3 320.4,182.2 320.1,181.2 319.7,180.2 319.3,179.3 319.0,178.4 318.6,177.5 318.2,176.7 317.8,175.9 317.4,175.1 317.0,174.4 316.6,173.7 316.2,173.1 315.8,172.5 315.4,172.0 315.0,171.4 314.6,171.0 314.1,170.5 313.7,170.1 313.3,169.8 312.9,169.5 312.4,169.2 312.0,169.0 311.5,168.8 311.1,168.7 310.7,168.6 310.2,168.5 309.8,168.5 309.4,168.5 308.9,168.6 308.5,168.7 308.1,168.8 307.6,169.0 307.2,169.2 306.7,169.5 306.3,169.8 305.9,170.1 305.5,170.5 305.0,171.0 304.6,171.4 304.2,172.0 303.8,172.5 303.4,173.1 303.0,173.7 302.6,174.4 302.2,175.1 301.8,175.9 301.4,176.7 301.0,177.5 300.6,178.4 300.3,179.3 299.9,180.2 299.5,181.2 299.2,182.2 298.8,183.3 298.5,184.4 298.2,185.5 297.8,186.7 297.5,187.9 297.2,189.1 296.9,190.4 296.6,191.7 296.3,193.1 296.0,194.4 295.8,195.9 295.5,197.3 295.3,198.8 295.0,200.3 294.8,201.8 294.6,203.4 294.4,205.0 294.1,206.7 294.0,208.3 293.8,210.0 293.6,211.7 293.4,213.5 293.3,215.3 293.1,217.1 293.0,218.9 292.9,220.7 292.8,222.6 292.7,224.5 292.6,226.5 292.5,228.4 292.4,230.4 292.4,232.4 292.4,234.4 292.3,236.4 292.3,238.5 292.3,240.6 292.3,242.7 292.3,244.8 292.3,246.9 292.4,249.1 292.4,251.2 292.5,253.4 292.6,255.6 292.7,257.8 292.8,260.0 292.9,262.3 293.0,264.5 293.1,266.8 293.3,269.0 293.4,271.3 293.6,273.6 293.8,275.9 294.0,278.2 294.2,280.5 294.4,282.8 294.6,285.1 294.8,287.4 295.1,289.7 295.3,292.0 295.6,294.3 295.9,296.6 296.1,298.9 296.4,301.2 296.7,303.5 297.1,305.8 297.4,308.1 297.7,310.4 298.0,312.7 298.4,315.0 298.8,317.2 299.1,319.5 299.5,321.7 299.9,324.0 300.3,326.2 300.7,328.4 301.1,330.6 301.5,332.8 301.9,335.0 302.3,337.1 302.8,339.3 303.2,341.4 303.6,343.5 304.1,345.6 304.5,347.6 305.0,349.7 305.4,351.7 305.9,353.7 306.4,355.6 306.8,357.6 307.3,359.5 307.8,361.4 308.2,363.3 308.7,365.1 309.2,366.9 309.7,368.7 309.5,368.1 309.1,366.5 308.6,365.0 308.2,363.5 307.8,362.1 307.4,360.7 307.0,359.3 306.5,357.9 306.1,356.6 305.7,355.3 305.3,354.0 304.9,352.7 304.5,351.5 304.1,350.3 303.7,349.2 303.3,348.1 302.9,347.0 302.5,345.9 302.1,344.9 301.8,343.9 301.4,342.9 301.0,342.0 300.7,341.1 300.3,340.2 300.0,339.4 299.6,338.6 299.3,337.8 299.0,337.1 298.7,336.4 298.3,335.7 298.0,335.0 297.7,334.4 297.4,333.8 297.2,333.2 296.9,332.7 296.6,332.2 296.4,331.7 296.1,331.3 295.9,330.9 295.6,330.5 295.4,330.2 295.2,329.8 295.0,329.5 294.8,329.3 294.6,329.0 294.4,328.8 294.2,328.7 294.1,328.5 293.9,328.4 293.8,328.3 293.6,328.2 293.5,328.1 293.4,328.1 293.3,328.1 293.2,328.1 293.1,328.2 293.1,328.3 293.0,328.4 292.9,328.5 292.9,328.6 292.9,328.8 292.8,329.0 292.8,329.2 292.8,329.4 292.8,329.7 292.8,329.9 292.9,330.2 292.9,330.5 292.9,330.9 293.0,331.2 293.0,331.6 293.1,332.0 293.2,332.4 293.3,332.8 293.4,333.2 293.5,333.7 293.6,334.1 293.8,334.6 293.9,335.1 294.0,335.6 294.2,336.1 294.4,336.6 294.5,337.2 294.7,337.7 294.9,338.3 295.1,338.9 295.3,339.5 295.5,340.1 295.7,340.7 296.0,341.3 296.2,341.9 296.4,342.6 296.7,343.2 297.0,343.9 297.2,344.5 297.5,345.2 297.8,345.8 298.0,346.5 298.3,347.2 298.6,347.9 298.9,348.6 299.2,349.2 299.6,349.9 299.9,350.6 300.2,351.3 300.5,352.0 300.9,352.7 301.2,353.4 301.5,354.1 301.9,354.8 302.2,355.5 302.6,356.2 302.9,356.9 303.3,357.6 303.7,358.3 304.0,359.0 304.4,359.7 304.8,360.4 305.1,361.1 305.5,361.8 305.9,362.5 306.3,363.2 306.6,363.8 307.0,364.5 307.4,365.2 307.8,365.8 308.2,366.5 308.5,367.1 308.9,367.8 309.3,368.4 309.7,369.0 309.5,368.8 309.1,368.1 308.8,367.5 308.4,366.9 308.0,366.3 307.6,365.7 307.2,365.2 306.9,364.6 306.5,364.0 306.1,363.5 305.8,362.9 305.4,362.4 305.0,361.9 304.7,361.4 304.3,360.9 304.0,360.4 303.6,359.9 303.3,359.4 302.9,358.9 302.6,358.5 302.2,358.0 301.9,357.6 301.6,357.2 301.3,356.8 300.9,356.4 300.6,356.0 300.3,355.6 300.0,355.2 299.7,354.8 299.4,354.5 299.1,354.2 298.8,353.8 298.6,353.5 298.3,353.2 298.0,352.9 297.7,352.6 297.5,352.3 297.2,352.1 297.0,351.8 296.8,351.6 296.5,351.3 296.3,351.1 296.1,350.9 295.9,350.7 295.7,350.5 295.5,350.3 295.3,350.2 295.1,350.0 294.9,349.9 294.7,349.7 294.6,349.6 294.4,349.5 294.2,349.4 294.1,349.3 294.0,349.2 293.8,349.1 293.7,349.0 293.6,349.0 293.5,348.9 293.4,348.9 293.3,348.9 293.2,348.9 293.1,348.8 293.0,348.8 292.9,348.8 292.9,348.9 292.8,348.9 292.8,348.9 292.7,349.0 292.7,349.0 292.7,349.1 292.7,349.1 292.6,349.2 292.6,349.3 292.6,349.4 292.6,349.5 292.7,349.6 292.7,349.7 292.7,349.8 292.7,349.9 292.8,350.1 292.8,350.2 292.9,350.3 292.9,350.5 293.0,350.6 293.1,350.8 293.2,351.0 293.2,351.1 293.3,351.3 293.4,351.5 293.5,351.7 293.6,351.9 293.8,352.1 293.9,352.3 294.0,352.5 294.1,352.7 294.3,352.9 294.4,353.1 294.6,353.4 294.7,353.6 294.9,353.8 295.0,354.0 295.2,354.3 295.4,354.5 295.5,354.8 295.7,355.0 295.9,355.3 296.1,355.5 296.3,355.8 296.5,356.0 296.7,356.3 296.9,356.5 297.1,356.8 297.3,357.1 297.5,357.3 297.8,357.6 298.0,357.8 298.2,358.1 298.5,358.4 298.7,358.7 298.9,358.9 299.2,359.2 299.4,359.5 299.7,359.7 299.9,360.0 300.2,360.3 300.4,360.6 300.7,360.8 300.9,361.1 301.2,361.4 301.4,361.6 301.7,361.9 302.0,362.2 302.2,362.4 302.5,362.7 302.8,363.0 303.0,363.2 303.3,363.5 303.6,363.8 303.9,364.0 304.1,364.3 304.4,364.6 304.7,364.8 305.0,365.1 305.2,365.3 305.5,365.6 305.8,365.8 306.1,366.1 306.4,366.3 306.6,366.6 306.9,366.8 307.2,367.1 307.5,367.3 307.8,367.5 308.0,367.8 308.3,368.0 308.6,368.2 308.9,368.4 309.1,368.7 309.4,368.9 309.7,369.1 309.6,369.1 309.4,368.9 309.1,368.7 308.8,368.4 308.6,368.2 308.3,368.0 308.0,367.8 307.8,367.6 307.5,367.5 307.2,367.3 307.0,367.1 306.7,366.9 306.5,366.7 306.2,366.5 306.0,366.4 305.7,366.2 305.5,366.0 305.2,365.9 305.0,365.7 304.7,365.5 304.5,365.4 304.3,365.2 304.0,365.1 303.8,364.9 303.6,364.8 303.3,364.7 303.1,364.5 302.9,364.4 302.7,364.3 302.5,364.1 302.3,364.0 302.0,363.9 301.8,363.8 301.6,363.7 301.4,363.6 301.2,363.4 301.0,363.3 300.8,363.2 300.7,363.1 300.5,363.1 300.3,363.0 300.1,362.9 299.9,362.8 299.7,362.7 299.6,362.6 299.4,362.5 299.2,362.5 299.1,362.4 298.9,362.3 298.8,362.3 298.6,362.2 298.5,362.1 298.3,362.1 298.2,362.0 298.0,362.0 297.9,361.9 297.7,361.9 297.6,361.8 297.5,361.8 297.4,361.8 297.2,361.7 297.1,361.7 297.0,361.7 296.9,361.6 296.8,361.6 296.7,361.6 296.6,361.6 296.5,361.5 296.4,361.5 296.3,361.5 296.2,361.5 296.1,361.5 296.0,361.5 295.9,361.5 295.8,361.5 295.8,361.5 295.7,361.5 295.6,361.5 295.6,361.5 295.5,361.5 295.4,361.5 295.4,361.5 295.3,361.5 295.3,361.5 295.2,361.5 295.2,361.5 295.1,361.6 295.1,361.6 295.0,361.6 295.0,361.6 295.0,361.6 294.9,361.7 294.9,361.7 294.9,361.7 294.9,361.8 294.8,361.8 294.8,361.8 294.8,361.8 294.8,361.9 294.8,361.9 294.8,362.0 294.8,362.0 294.8,362.0 294.8,362.1 294.8,362.1 294.8,362.2 294.8,362.2 294.8,362.2 294.8,362.3 294.8,362.3 294.8,362.4 294.8,362.4 294.8,362.5 294.9,362.5 294.9,362.6 294.9,362.6 294.9,362.7 295.0,362.7 295.0,362.8 295.0,362.8 295.1,362.9 295.1,362.9 295.1,363.0 295.2,363.0 295.2,363.1 295.3,363.1 295.3,363.2 295.3,363.2 295.4,363.3 295.4,363.4 295.5,363.4 295.5,363.5 295.6,363.5 295.6,363.6 295.7,363.6 295.7,363.7 295.8,363.8 295.9,363.8 295.9,363.9 296.0,363.9 296.0,364.0 296.1,364.0 296.2,364.1 296.2,364.2 296.3,364.2 296.4,364.3 296.4,364.3 296.5,364.4 296.6,364.4 296.6,364.5 296.7,364.6 296.8,364.6 296.9,364.7 296.9,364.7 297.0,364.8 297.1,364.9 297.2,364.9 297.2,365.0 297.3,365.0 297.4,365.1 297.5,365.1 297.5,365.2 297.6,365.2 297.7,365.3 297.8,365.4 297.9,365.4 297.9,365.5 298.0,365.5 298.1,365.6 298.2,365.6 298.3,365.7 298.3,365.7 298.4,365.8 298.5,365.8 298.6,365.9 298.7,365.9 298.8,366.0 298.8,366.0 298.9,366.1 299.0,366.1 299.1,366.2 299.2,366.2 299.3,366.3 299.4,366.3 299.4,366.4 299.5,366.4 299.6,366.5 299.7,366.5 299.8,366.6 299.9,366.6 299.9,366.7 300.0,366.7 300.1,366.7 300.2,366.8 300.3,366.8 300.4,366.9 300.5,366.9 300.5,367.0 300.6,367.0 300.7,367.0 300.8,367.1 300.9,367.1 301.0,367.2 301.0,367.2 301.1,367.2 301.2,367.3 301.3,367.3 301.4,367.3 301.4,367.4 301.5,367.4 301.6,367.5 301.7,367.5 301.8,367.5 301.9,367.6 301.9,367.6 302.0,367.6 302.1,367.7 302.2,367.7 302.2,367.7 302.3,367.8 302.4,367.8 302.5,367.8 302.6,367.9 302.6,367.9 302.7,367.9 302.8,367.9 302.9,368.0 302.9,368.0 303.0,368.0 303.1,368.1 303.2,368.1 303.2,368.1 303.3,368.1 303.4,368.2 303.5,368.2 303.5,368.2 303.6,368.2 303.7,368.3 303.7,368.3 303.8,368.3 303.9,368.3 304.0,368.4 304.0,368.4 304.1,368.4 304.2,368.4 304.2,368.5 304.3,368.5 304.4,368.5 304.4,368.5 304.5,368.5 304.6,368.6 304.6,368.6 304.7,368.6 304.8,368.6 304.8,368.6 304.9,368.7 305.0,368.7 305.0,368.7 305.1,368.7 305.2,368.7 305.2,368.7 305.3,368.8 305.4,368.8 305.4,368.8 305.5,368.8 305.6,368.8 305.6,368.8 305.7,368.8 305.8,368.9 305.8,368.9 305.9,368.9 306.0,368.9 306.0,368.9 306.1,368.9 306.2,368.9 306.2,369.0 306.3,369.0 306.4,369.0 306.4,369.0 306.5,369.0 306.6,369.0 306.6,369.0 306.7,369.0 306.8,369.0 306.8,369.1 306.9,369.1 307.0,369.1 307.1,369.1 307.1,369.1 307.2,369.1 307.3,369.1 307.4,369.1 307.5,369.1 307.6,369.1 307.6,369.1 307.7,369.2 307.8,369.2 307.9,369.2 308.1,369.2 308.2,369.2 308.3,369.2 308.4,369.2 308.6,369.2 308.7,369.2 308.9,369.2 309.2,369.2 309.8,369.2 309.2,369.2 308.9,369.2 308.7,369.2 308.6,369.2 308.4,369.2 308.3,369.2 308.2,369.2 308.1,369.2 307.9,369.2 307.8,369.2 307.7,369.2 307.6,369.3 307.6,369.3 307.5,369.3 307.4,369.3 307.3,369.3 307.2,369.3 307.1,369.3 307.1,369.3 307.0,369.3 306.9,369.3 306.8,369.3 306.8,369.4 306.7,369.4 306.6,369.4 306.6,369.4 306.5,369.4 306.4,369.4 306.4,369.4 306.3,369.4 306.2,369.4 306.2,369.5 306.1,369.5 306.0,369.5 306.0,369.5 305.9,369.5 305.8,369.5 305.8,369.5 305.7,369.6 305.6,369.6 305.6,369.6 305.5,369.6 305.4,369.6 305.4,369.6 305.3,369.6 305.2,369.7 305.2,369.7 305.1,369.7 305.0,369.7 305.0,369.7 304.9,369.7 304.8,369.8 304.8,369.8 304.7,369.8 304.6,369.8 304.6,369.8 304.5,369.9 304.4,369.9 304.4,369.9 304.3,369.9 304.2,369.9 304.2,370.0 304.1,370.0 304.0,370.0 304.0,370.0 303.9,370.1 303.8,370.1 303.7,370.1 303.7,370.1 303.6,370.2 303.5,370.2 303.5,370.2 303.4,370.2 303.3,370.3 303.2,370.3 303.2,370.3 303.1,370.3 303.0,370.4 302.9,370.4 302.9,370.4 302.8,370.5 302.7,370.5 302.6,370.5 302.6,370.5 302.5,370.6 302.4,370.6 302.3,370.6 302.2,370.7 302.2,370.7 302.1,370.7 302.0,370.8 301.9,370.8 301.9,370.8 301.8,370.9 301.7,370.9 301.6,370.9 301.5,371.0 301.4,371.0 301.4,371.1 301.3,371.1 301.2,371.1 301.1,371.2 301.0,371.2 301.0,371.2 300.9,371.3 300.8,371.3 300.7,371.4 300.6,371.4 300.5,371.4 300.5,371.5 300.4,371.5 300.3,371.6 300.2,371.6 300.1,371.7 300.0,371.7 299.9,371.7 299.9,371.8 299.8,371.8 299.7,371.9 299.6,371.9 299.5,372.0 299.4,372.0 299.4,372.1 299.3,372.1 299.2,372.2 299.1,372.2 299.0,372.3 298.9,372.3 298.8,372.4 298.8,372.4 298.7,372.5 298.6,372.5 298.5,372.6 298.4,372.6 298.3,372.7 298.3,372.7 298.2,372.8 298.1,372.8 298.0,372.9 297.9,372.9 297.9,373.0 297.8,373.0 297.7,373.1 297.6,373.2 297.5,373.2 297.5,373.3 297.4,373.3 297.3,373.4 297.2,373.4 297.2,373.5 297.1,373.5 297.0,373.6 296.9,373.7 296.9,373.7 296.8,373.8 296.7,373.8 296.6,373.9 296.6,374.0 296.5,374.0 296.4,374.1 296.4,374.1 296.3,374.2 296.2,374.2 296.2,374.3 296.1,374.4 296.0,374.4 296.0,374.5 295.9,374.5 295.9,374.6 295.8,374.6 295.7,374.7 295.7,374.8 295.6,374.8 295.6,374.9 295.5,374.9 295.5,375.0 295.4,375.0 295.4,375.1 295.3,375.2 295.3,375.2 295.3,375.3 295.2,375.3 295.2,375.4 295.1,375.4 295.1,375.5 295.1,375.5 295.0,375.6 295.0,375.6 295.0,375.7 294.9,375.7 294.9,375.8 294.9,375.8 294.9,375.9 294.8,375.9 294.8,376.0 294.8,376.0 294.8,376.1 294.8,376.1 294.8,376.2 294.8,376.2 294.8,376.2 294.8,376.3 294.8,376.3 294.8,376.4 294.8,376.4 294.8,376.4 294.8,376.5 294.8,376.5 294.8,376.6 294.8,376.6 294.8,376.6 294.9,376.6 294.9,376.7 294.9,376.7 294.9,376.7 295.0,376.8 295.0,376.8 295.0,376.8 295.1,376.8 295.1,376.8 295.2,376.9 295.2,376.9 295.3,376.9 295.3,376.9 295.4,376.9 295.4,376.9 295.5,376.9 295.6,376.9 295.6,376.9 295.7,376.9 295.8,376.9 295.8,376.9 295.9,376.9 296.0,376.9 296.1,376.9 296.2,376.9 296.3,376.9 296.4,376.9 296.5,376.9 296.6,376.8 296.7,376.8 296.8,376.8 296.9,376.8 297.0,376.7 297.1,376.7 297.2,376.7 297.4,376.6 297.5,376.6 297.6,376.6 297.7,376.5 297.9,376.5 298.0,376.4 298.2,376.4 298.3,376.3 298.5,376.3 298.6,376.2 298.8,376.1 298.9,376.1 299.1,376.0 299.2,375.9 299.4,375.9 299.6,375.8 299.7,375.7 299.9,375.6 300.1,375.5 300.3,375.4 300.5,375.3 300.7,375.3 300.8,375.2 301.0,375.1 301.2,375.0 301.4,374.8 301.6,374.7 301.8,374.6 302.0,374.5 302.3,374.4 302.5,374.3 302.7,374.1 302.9,374.0 303.1,373.9 303.3,373.7 303.6,373.6 303.8,373.5 304.0,373.3 304.3,373.2 304.5,373.0 304.7,372.9 305.0,372.7 305.2,372.5 305.5,372.4 305.7,372.2 306.0,372.0 306.2,371.9 306.5,371.7 306.7,371.5 307.0,371.3 307.2,371.1 307.5,370.9 307.8,370.8 308.0,370.6 308.3,370.4 308.6,370.2 308.8,370.0 309.1,369.7 309.4,369.5 309.6,369.3 309.7,369.3 309.4,369.5 309.1,369.7 308.9,370.0 308.6,370.2 308.3,370.4 308.0,370.6 307.8,370.9 307.5,371.1 307.2,371.3 306.9,371.6 306.6,371.8 306.4,372.1 306.1,372.3 305.8,372.6 305.5,372.8 305.2,373.1 305.0,373.3 304.7,373.6 304.4,373.8 304.1,374.1 303.9,374.4 303.6,374.6 303.3,374.9 303.0,375.2 302.8,375.4 302.5,375.7 302.2,376.0 302.0,376.2 301.7,376.5 301.4,376.8 301.2,377.0 300.9,377.3 300.7,377.6 300.4,377.8 300.2,378.1 299.9,378.4 299.7,378.7 299.4,378.9 299.2,379.2 298.9,379.5 298.7,379.7 298.5,380.0 298.2,380.3 298.0,380.6 297.8,380.8 297.5,381.1 297.3,381.3 297.1,381.6 296.9,381.9 296.7,382.1 296.5,382.4 296.3,382.6 296.1,382.9 295.9,383.1 295.7,383.4 295.5,383.6 295.4,383.9 295.2,384.1 295.0,384.4 294.9,384.6 294.7,384.8 294.6,385.0 294.4,385.3 294.3,385.5 294.1,385.7 294.0,385.9 293.9,386.1 293.8,386.3 293.6,386.5 293.5,386.7 293.4,386.9 293.3,387.1 293.2,387.3 293.2,387.4 293.1,387.6 293.0,387.8 292.9,387.9 292.9,388.1 292.8,388.2 292.8,388.3 292.7,388.5 292.7,388.6 292.7,388.7 292.7,388.8 292.6,388.9 292.6,389.0 292.6,389.1 292.6,389.2 292.7,389.3 292.7,389.3 292.7,389.4 292.7,389.4 292.8,389.5 292.8,389.5 292.9,389.5 292.9,389.6 293.0,389.6 293.1,389.6 293.2,389.5 293.3,389.5 293.4,389.5 293.5,389.5 293.6,389.4 293.7,389.4 293.8,389.3 294.0,389.2 294.1,389.1 294.2,389.0 294.4,388.9 294.6,388.8 294.7,388.7 294.9,388.5 295.1,388.4 295.3,388.2 295.5,388.1 295.7,387.9 295.9,387.7 296.1,387.5 296.3,387.3 296.5,387.1 296.8,386.8 297.0,386.6 297.2,386.3 297.5,386.1 297.7,385.8 298.0,385.5 298.3,385.2 298.6,384.9 298.8,384.6 299.1,384.2 299.4,383.9 299.7,383.6 300.0,383.2 300.3,382.8 300.6,382.4 300.9,382.0 301.3,381.6 301.6,381.2 301.9,380.8 302.2,380.4 302.6,379.9 302.9,379.5 303.3,379.0 303.6,378.5 304.0,378.0 304.3,377.5 304.7,377.0 305.0,376.5 305.4,376.0 305.8,375.5 306.1,374.9 306.5,374.4 306.9,373.8 307.2,373.2 307.6,372.7 308.0,372.1 308.4,371.5 308.8,370.9 309.1,370.3 309.5,369.6 309.7,369.4 309.3,370.0 308.9,370.6 308.5,371.3 308.2,371.9 307.8,372.6 307.4,373.2 307.0,373.9 306.6,374.6 306.3,375.2 305.9,375.9 305.5,376.6 305.1,377.3 304.8,378.0 304.4,378.7 304.0,379.4 303.7,380.1 303.3,380.8 302.9,381.5 302.6,382.2 302.2,382.9 301.9,383.6 301.5,384.3 301.2,385.0 300.9,385.7 300.5,386.4 300.2,387.1 299.9,387.8 299.6,388.5 299.2,389.2 298.9,389.8 298.6,390.5 298.3,391.2 298.0,391.9 297.8,392.6 297.5,393.2 297.2,393.9 297.0,394.5 296.7,395.2 296.4,395.8 296.2,396.5 296.0,397.1 295.7,397.7 295.5,398.3 295.3,398.9 295.1,399.5 294.9,400.1 294.7,400.7 294.5,401.2 294.4,401.8 294.2,402.3 294.0,402.8 293.9,403.3 293.8,403.8 293.6,404.3 293.5,404.7 293.4,405.2 293.3,405.6 293.2,406.0 293.1,406.4 293.0,406.8 293.0,407.2 292.9,407.5 292.9,407.9 292.9,408.2 292.8,408.5 292.8,408.7 292.8,409.0 292.8,409.2 292.8,409.4 292.9,409.6 292.9,409.8 292.9,409.9 293.0,410.0 293.1,410.1 293.1,410.2 293.2,410.3 293.3,410.3 293.4,410.3 293.5,410.3 293.6,410.2 293.8,410.1 293.9,410.0 294.1,409.9 294.2,409.7 294.4,409.6 294.6,409.4 294.8,409.1 295.0,408.9 295.2,408.6 295.4,408.2 295.6,407.9 295.9,407.5 296.1,407.1 296.4,406.7 296.6,406.2 296.9,405.7 297.2,405.2 297.4,404.6 297.7,404.0 298.0,403.4 298.3,402.7 298.7,402.0 299.0,401.3 299.3,400.6 299.6,399.8 300.0,399.0 300.3,398.2 300.7,397.3 301.0,396.4 301.4,395.5 301.8,394.5 302.1,393.5 302.5,392.5 302.9,391.4 303.3,390.3 303.7,389.2 304.1,388.1 304.5,386.9 304.9,385.7 305.3,384.4 305.7,383.1 306.1,381.8 306.5,380.5 307.0,379.1 307.4,377.7 307.8,376.3 308.2,374.9 308.6,373.4 309.1,371.9 309.5,370.3 309.7,369.7 309.2,371.5 308.7,373.3 308.2,375.1 307.8,377.0 307.3,378.9 306.8,380.8 306.4,382.8 305.9,384.7 305.4,386.7 305.0,388.7 304.5,390.8 304.1,392.8 303.6,394.9 303.2,397.0 302.8,399.1 302.3,401.3 301.9,403.4 301.5,405.6 301.1,407.8 300.7,410.0 300.3,412.2 299.9,414.4 299.5,416.7 299.1,418.9 298.8,421.2 298.4,423.4 298.0,425.7 297.7,428.0 297.4,430.3 297.1,432.6 296.7,434.9 296.4,437.2 296.1,439.5 295.9,441.8 295.6,444.1 295.3,446.4 295.1,448.7 294.8,451.0 294.6,453.3 294.4,455.6 294.2,457.9 294.0,460.2 293.8,462.5 293.6,464.8 293.4,467.1 293.3,469.4 293.1,471.6 293.0,473.9 292.9,476.1 292.8,478.4 292.7,480.6 292.6,482.8 292.5,485.0 292.4,487.2 292.4,489.3 292.3,491.5 292.3,493.6 292.3,495.7 292.3,497.8 292.3,499.9 292.3,502.0 292.4,504.0 292.4,506.0 292.4,508.0 292.5,510.0 292.6,511.9 292.7,513.9 292.8,515.8 292.9,517.7 293.0,519.5 293.1,521.3 293.3,523.1 293.4,524.9 293.6,526.7 293.8,528.4 294.0,530.1 294.1,531.7 294.4,533.4 294.6,535.0 294.8,536.6 295.0,538.1 295.3,539.6 295.5,541.1 295.8,542.5 296.0,544.0 296.3,545.3 296.6,546.7 296.9,548.0 297.2,549.3 297.5,550.5 297.8,551.7 298.2,552.9 298.5,554.0 298.8,555.1 299.2,556.2 299.5,557.2 299.9,558.2 300.3,559.1 300.6,560.0 301.0,560.9 301.4,561.7 301.8,562.5 302.2,563.3 302.6,564.0 303.0,564.7 303.4,565.3 303.8,565.9 304.2,566.4 304.6,567.0 305.0,567.4 305.5,567.9 305.9,568.3 306.3,568.6 306.7,568.9 307.2,569.2 307.6,569.4 308.1,569.6 308.5,569.7 308.9,569.8 309.4,569.9 309.8,569.9 310.2,569.9 310.7,569.8 311.1,569.7 311.5,569.6 312.0,569.4 312.4,569.2 312.9,568.9 313.3,568.6 313.7,568.3 314.1,567.9 314.6,567.4 315.0,567.0 315.4,566.4 315.8,565.9 316.2,565.3 316.6,564.7 317.0,564.0 317.4,563.3 317.8,562.5 318.2,561.7 318.6,560.9 319.0,560.0 319.3,559.1 319.7,558.2 320.1,557.2 320.4,556.2 320.8,555.1 321.1,554.0 321.4,552.9 321.8,551.7 322.1,550.5 322.4,549.3 322.7,548.0 323.0,546.7 323.3,545.3 323.6,544.0 323.8,542.5 324.1,541.1 324.3,539.6 324.6,538.1 324.8,536.6 325.0,535.0 325.2,533.4 325.5,531.7 325.6,530.1 325.8,528.4 326.0,526.7 326.2,524.9 326.3,523.1 326.5,521.3 326.6,519.5 326.7,517.7 326.8,515.8 326.9,513.9 327.0,511.9 327.1,510.0 327.2,508.0 327.2,506.0 327.2,504.0 327.3,502.0 327.3,499.9 327.3,497.8 327.3,495.7 327.3,493.6 327.3,491.5 327.2,489.3 327.2,487.2 327.1,485.0 327.0,482.8 326.9,480.6 326.8,478.4 326.7,476.1 326.6,473.9 326.5,471.6 326.3,469.4 326.2,467.1 326.0,464.8 325.8,462.5 325.6,460.2 325.4,457.9 325.2,455.6 325.0,453.3 324.8,451.0 324.5,448.7 324.3,446.4 324.0,444.1 323.7,441.8 323.5,439.5 323.2,437.2 322.9,434.9 322.5,432.6 322.2,430.3 321.9,428.0 321.6,425.7 321.2,423.4 320.8,421.2 320.5,418.9 320.1,416.7 319.7,414.4 319.3,412.2 318.9,410.0 318.5,407.8 318.1,405.6 317.7,403.4 317.3,401.3 316.8,399.1 316.4,397.0 316.0,394.9 315.5,392.8 315.1,390.8 314.6,388.7 314.2,386.7 313.7,384.7 313.2,382.8 312.8,380.8 312.3,378.9 311.8,377.0 311.4,375.1 310.9,373.3 310.4,371.5 309.9,369.7 310.1,370.3 310.5,371.9 311.0,373.4 311.4,374.9 311.8,376.3 312.2,377.7 312.6,379.1 313.1,380.5 313.5,381.8 313.9,383.1 314.3,384.4 314.7,385.7 315.1,386.9 315.5,388.1 315.9,389.2 316.3,390.3 316.7,391.4 317.1,392.5 317.5,393.5 317.8,394.5 318.2,395.5 318.6,396.4 318.9,397.3 319.3,398.2 319.6,399.0 320.0,399.8 320.3,400.6 320.6,401.3 320.9,402.0 321.3,402.7 321.6,403.4 321.9,404.0 322.2,404.6 322.4,405.2 322.7,405.7 323.0,406.2 323.2,406.7 323.5,407.1 323.7,407.5 324.0,407.9 324.2,408.2 324.4,408.6 324.6,408.9 324.8,409.1 325.0,409.4 325.2,409.6 325.4,409.7 325.5,409.9 325.7,410.0 325.8,410.1 326.0,410.2 326.1,410.3 326.2,410.3 326.3,410.3 326.4,410.3 326.5,410.2 326.5,410.1 326.6,410.0 326.7,409.9 326.7,409.8 326.7,409.6 326.8,409.4 326.8,409.2 326.8,409.0 326.8,408.7 326.8,408.5 326.7,408.2 326.7,407.9 326.7,407.5 326.6,407.2 326.6,406.8 326.5,406.4 326.4,406.0 326.3,405.6 326.2,405.2 326.1,404.7 326.0,404.3 325.8,403.8 325.7,403.3 325.6,402.8 325.4,402.3 325.2,401.8 325.1,401.2 324.9,400.7 324.7,400.1 324.5,399.5 324.3,398.9 324.1,398.3 323.9,397.7 323.6,397.1 323.4,396.5 323.2,395.8 322.9,395.2 322.6,394.5 322.4,393.9 322.1,393.2 321.8,392.6 321.6,391.9 321.3,391.2 321.0,390.5 320.7,389.8 320.4,389.2 320.0,388.5 319.7,387.8 319.4,387.1 319.1,386.4 318.7,385.7 318.4,385.0 318.1,384.3 317.7,383.6 317.4,382.9 317.0,382.2 316.7,381.5 316.3,380.8 315.9,380.1 315.6,379.4 315.2,378.7 314.8,378.0 314.5,377.3 314.1,376.6 313.7,375.9 313.3,375.2 313.0,374.6 312.6,373.9 312.2,373.2 311.8,372.6 311.4,371.9 311.1,371.3 310.7,370.6 310.3,370.0 309.9,369.4 310.1,369.6 310.5,370.3 310.8,370.9 311.2,371.5 311.6,372.1 312.0,372.7 312.4,373.2 312.7,373.8 313.1,374.4 313.5,374.9 313.8,375.5 314.2,376.0 314.6,376.5 314.9,377.0 315.3,377.5 315.6,378.0 316.0,378.5 316.3,379.0 316.7,379.5 317.0,379.9 317.4,380.4 317.7,380.8 318.0,381.2 318.3,381.6 318.7,382.0 319.0,382.4 319.3,382.8 319.6,383.2 319.9,383.6 320.2,383.9 320.5,384.2 320.8,384.6 321.0,384.9 321.3,385.2 321.6,385.5 321.9,385.8 322.1,386.1 322.4,386.3 322.6,386.6 322.8,386.8 323.1,387.1 323.3,387.3 323.5,387.5 323.7,387.7 323.9,387.9 324.1,388.1 324.3,388.2 324.5,388.4 324.7,388.5 324.9,388.7 325.0,388.8 325.2,388.9 325.4,389.0 325.5,389.1 325.6,389.2 325.8,389.3 325.9,389.4 326.0,389.4 326.1,389.5 326.2,389.5 326.3,389.5 326.4,389.5 326.5,389.6 326.6,389.6 326.7,389.6 326.7,389.5 326.8,389.5 326.8,389.5 326.9,389.4 326.9,389.4 326.9,389.3 326.9,389.3 327.0,389.2 327.0,389.1 327.0,389.0 327.0,388.9 326.9,388.8 326.9,388.7 326.9,388.6 326.9,388.5 326.8,388.3 326.8,388.2 326.7,388.1 326.7,387.9 326.6,387.8 326.5,387.6 326.4,387.4 326.4,387.3 326.3,387.1 326.2,386.9 326.1,386.7 326.0,386.5 325.8,386.3 325.7,386.1 325.6,385.9 325.5,385.7 325.3,385.5 325.2,385.3 325.0,385.0 324.9,384.8 324.7,384.6 324.6,384.4 324.4,384.1 324.2,383.9 324.1,383.6 323.9,383.4 323.7,383.1 323.5,382.9 323.3,382.6 323.1,382.4 322.9,382.1 322.7,381.9 322.5,381.6 322.3,381.3 322.1,381.1 321.8,380.8 321.6,380.6 321.4,380.3 321.1,380.0 320.9,379.7 320.7,379.5 320.4,379.2 320.2,378.9 319.9,378.7 319.7,378.4 319.4,378.1 319.2,377.8 318.9,377.6 318.7,377.3 318.4,377.0 318.2,376.8 317.9,376.5 317.6,376.2 317.4,376.0 317.1,375.7 316.8,375.4 316.6,375.2 316.3,374.9 316.0,374.6 315.7,374.4 315.5,374.1 315.2,373.8 314.9,373.6 314.6,373.3 314.4,373.1 314.1,372.8 313.8,372.6 313.5,372.3 313.2,372.1 313.0,371.8 312.7,371.6 312.4,371.3 312.1,371.1 311.8,370.9 311.6,370.6 311.3,370.4 311.0,370.2 310.7,370.0 310.5,369.7 310.2,369.5 309.9,369.3 310.0,369.3 310.2,369.5 310.5,369.7 310.8,370.0 311.0,370.2 311.3,370.4 311.6,370.6 311.8,370.8 312.1,370.9 312.4,371.1 312.6,371.3 312.9,371.5 313.1,371.7 313.4,371.9 313.6,372.0 313.9,372.2 314.1,372.4 314.4,372.5 314.6,372.7 314.9,372.9 315.1,373.0 315.3,373.2 315.6,373.3 315.8,373.5 316.0,373.6 316.3,373.7 316.5,373.9 316.7,374.0 316.9,374.1 317.1,374.3 317.3,374.4 317.6,374.5 317.8,374.6 318.0,374.7 318.2,374.8 318.4,375.0 318.6,375.1 318.8,375.2 318.9,375.3 319.1,375.3 319.3,375.4 319.5,375.5 319.7,375.6 319.9,375.7 320.0,375.8 320.2,375.9 320.4,375.9 320.5,376.0 320.7,376.1 320.8,376.1 321.0,376.2 321.1,376.3 321.3,376.3 321.4,376.4 321.6,376.4 321.7,376.5 321.9,376.5 322.0,376.6 322.1,376.6 322.2,376.6 322.4,376.7 322.5,376.7 322.6,376.7 322.7,376.8 322.8,376.8 322.9,376.8 323.0,376.8 323.1,376.9 323.2,376.9 323.3,376.9 323.4,376.9 323.5,376.9 323.6,376.9 323.7,376.9 323.8,376.9 323.8,376.9 323.9,376.9 324.0,376.9 324.0,376.9 324.1,376.9 324.2,376.9 324.2,376.9 324.3,376.9 324.3,376.9 324.4,376.9 324.4,376.9 324.5,376.8 324.5,376.8 324.6,376.8 324.6,376.8 324.6,376.8 324.7,376.7 324.7,376.7 324.7,376.7 324.7,376.6 324.8,376.6 324.8,376.6 324.8,376.6 324.8,376.5 324.8,376.5 324.8,376.4 324.8,376.4 324.8,376.4 324.8,376.3 324.8,376.3 324.8,376.2 324.8,376.2 324.8,376.2 324.8,376.1 324.8,376.1 324.8,376.0 324.8,376.0 324.8,375.9 324.7,375.9 324.7,375.8 324.7,375.8 324.7,375.7 324.6,375.7 324.6,375.6 324.6,375.6 324.5,375.5 324.5,375.5 324.5,375.4 324.4,375.4 324.4,375.3 324.3,375.3 324.3,375.2 324.3,375.2 324.2,375.1 324.2,375.0 324.1,375.0 324.1,374.9 324.0,374.9 324.0,374.8 323.9,374.8 323.9,374.7 323.8,374.6 323.7,374.6 323.7,374.5 323.6,374.5 323.6,374.4 323.5,374.4 323.4,374.3 323.4,374.2 323.3,374.2 323.2,374.1 323.2,374.1 323.1,374.0 323.0,374.0 323.0,373.9 322.9,373.8 322.8,373.8 322.7,373.7 322.7,373.7 322.6,373.6 322.5,373.5 322.4,373.5 322.4,373.4 322.3,373.4 322.2,373.3 322.1,373.3 322.1,373.2 322.0,373.2 321.9,373.1 321.8,373.0 321.7,373.0 321.7,372.9 321.6,372.9 321.5,372.8 321.4,372.8 321.3,372.7 321.3,372.7 321.2,372.6 321.1,372.6 321.0,372.5 320.9,372.5 320.8,372.4 320.8,372.4 320.7,372.3 320.6,372.3 320.5,372.2 320.4,372.2 320.3,372.1 320.2,372.1 320.2,372.0 320.1,372.0 320.0,371.9 319.9,371.9 319.8,371.8 319.7,371.8 319.7,371.7 319.6,371.7 319.5,371.7 319.4,371.6 319.3,371.6 319.2,371.5 319.1,371.5 319.1,371.4 319.0,371.4 318.9,371.4 318.8,371.3 318.7,371.3 318.6,371.2 318.6,371.2 318.5,371.2 318.4,371.1 318.3,371.1 318.2,371.1 318.2,371.0 318.1,371.0 318.0,370.9 317.9,370.9 317.8,370.9 317.7,370.8 317.7,370.8 317.6,370.8 317.5,370.7 317.4,370.7 317.4,370.7 317.3,370.6 317.2,370.6 317.1,370.6 317.0,370.5 317.0,370.5 316.9,370.5 316.8,370.5 316.7,370.4 316.7,370.4 316.6,370.4 316.5,370.3 316.4,370.3 316.4,370.3 316.3,370.3 316.2,370.2 316.1,370.2 316.1,370.2 316.0,370.2 315.9,370.1 315.9,370.1 315.8,370.1 315.7,370.1 315.6,370.0 315.6,370.0 315.5,370.0 315.4,370.0 315.4,369.9 315.3,369.9 315.2,369.9 315.2,369.9 315.1,369.9 315.0,369.8 315.0,369.8 314.9,369.8 314.8,369.8 314.8,369.8 314.7,369.7 314.6,369.7 314.6,369.7 314.5,369.7 314.4,369.7 314.4,369.7 314.3,369.6 314.2,369.6 314.2,369.6 314.1,369.6 314.0,369.6 314.0,369.6 313.9,369.6 313.8,369.5 313.8,369.5 313.7,369.5 313.6,369.5 313.6,369.5 313.5,369.5 313.4,369.5 313.4,369.4 313.3,369.4 313.2,369.4 313.2,369.4 313.1,369.4 313.0,369.4 313.0,369.4 312.9,369.4 312.8,369.4 312.8,369.3 312.7,369.3 312.6,369.3 312.5,369.3 312.5,369.3 312.4,369.3 312.3,369.3 312.2,369.3 312.1,369.3 312.0,369.3 312.0,369.3 311.9,369.2 311.8,369.2 311.7,369.2 311.5,369.2 311.4,369.2 311.3,369.2 311.2,369.2 311.0,369.2 310.9,369.2 310.7,369.2 310.4,369.2 309.8,369.2"/>
<polyline fill="none" stroke="#000088" stroke-width="1.1" stroke-linejoin="round" points="309.8,369.2 309.8,369.2 309.8,369.2 309.9,369.2 309.9,369.2 309.9,369.2 309.9,369.2 309.9,369.2 310.0,369.2 310.0,369.2 310.0,369.2 310.0,369.2 310.0,369.2 310.1,369.2 310.1,369.2 310.1,369.2 310.1,369.2 310.1,369.2 310.1,369.2 310.2,369.2 310.2,369.2 310.2,369.2 310.2,369.2 310.2,369.2 310.3,369.2 310.3,369.2 310.3,369.2 310.3,369.2 310.3,369.2 310.4,369.2 310.4,369.2 310.4,369.2 310.4,369.2 310.4,369.2 310.5,369.2 310.5,369.1 310.5,369.1 310.5,369.1 310.5,369.1 310.5,369.1 310.6,369.1 310.6,369.1 310.6,369.1 310.6,369.1 310.6,369.1 310.7,369.1 310.7,369.1 310.7,369.1 310.7,369.1 310.7,369.1 310.7,369.1 310.8,369.1 310.8,369.1 310.8,369.1 310.8,369.1 310.8,369.1 310.8,369.1 310.9,369.1 310.9,369.1 310.9,369.1 310.9,369.1 310.9,369.0 311.0,369.0 311.0,369.0 311.0,369.0 311.0,369.0 311.0,369.0 311.0,369.0 311.1,369.0 311.1,369.0 311.1,369.0 311.1,369.0 311.1,369.0 311.1,369.0 311.2,369.0 311.2,369.0 311.2,369.0 311.2,369.0 311.2,369.0 311.2,369.0 311.2,368.9 311.3,368.9 311.3,368.9 311.3,368.9 311.3,368.9 311.3,368.9 311.3,368.9 311.4,368.9 311.4,368.9 311.4,368.9 311.4,368.9 311.4,368.9 311.4,368.9 311.4,368.9 311.5,368.9 311.5,368.8 311.5,368.8 311.5,368.8 311.5,368.8 311.5,368.8 311.5,368.8 311.6,368.8 311.6,368.8 311.6,368.8 311.6,368.8 311.6,368.8 311.6,368.8 311.6,368.8 311.7,368.8 311.7,368.7 311.7,368.7 311.7,368.7 311.7,368.7 311.7,368.7 311.7,368.7 311.7,368.7 311.8,368.7 311.8,368.7 311.8,368.7 311.8,368.7 311.8,368.7 311.8,368.7 311.8,368.6 311.8,368.6 311.8,368.6 311.9,368.6 311.9,368.6 311.9,368.6 311.9,368.6 311.9,368.6 311.9,368.6 311.9,368.6 311.9,368.6 311.9,368.6 311.9,368.6 312.0,368.5 312.0,368.5 312.0,368.5 312.0,368.5 312.0,368.5 312.0,368.5 312.0,368.5 312.0,368.5 312.0,368.5 312.0,368.5 312.1,368.5 312.1,368.5 312.1,368.4 312.1,368.4 312.1,368.4 312.1,368.4 312.1,368.4 312.1,368.4 312.1,368.4 312.1,368.4 312.1,368.4 312.1,368.4 312.1,368.4 312.2,368.4 312.2,368.3 312.2,368.3 312.2,368.3 312.2,368.3 312.2,368.3 312.2,368.3 312.2,368.3 312.2,368.3 312.2,368.3 312.2,368.3 312.2,368.3 312.2,368.3 312.2,368.2 312.2,368.2 312.2,368.2 312.2,368.2 312.3,368.2 312.3,368.2 312.3,368.2 312.3,368.2 312.3,368.2 312.3,368.2 312.3,368.2 312.3,368.2 312.3,368.2 312.3,368.1 312.3,368.1 312.3,368.1 312.3,368.1 312.3,368.1 312.3,368.1 312.3,368.1 312.3,368.1 312.3,368.1 312.3,368.1 312.3,368.1 312.3,368.1 312.3,368.1 312.3,368.0 312.3,368.0 312.3,368.0 312.3,368.0 312.3,368.0 312.3,368.0 312.3,368.0 312.3,368.0 312.3,368.0 312.3,368.0 312.3,368.0 312.3,368.0 312.3,368.0 312.3,367.9 312.3,367.9 312.3,367.9 312.3,367.9 312.3,367.9 312.3,367.9 312.3,367.9 312.3,367.9 312.3,367.9 312.3,367.9 312.3,367.9 312.3,367.9 312.3,367.9 312.3,367.9 312.3,367.9 312.3,367.8 312.3,367.8 312.3,367.8 312.3,367.8 312.3,367.8 312.3,367.8 312.3,367.8 312.3,367.8 312.3,367.8 312.3,367.8 312.3,367.8 312.3,367.8 312.3,367.8 312.3,367.8 312.3,367.8 312.3,367.8 312.3,367.8 312.3,367.7 312.3,367.7 312.3,367.7 312.3,367.7 312.3,367.7 312.3,367.7 312.3,367.7 312.3,367.7 312.3,367.7 312.3,367.7 312.3,367.7 312.2,367.7 312.2,367.7 312.2,367.7 312.2,367.7 312.2,367.7 312.2,367.7 312.2,367.7 312.2,367.7 312.2,367.7 312.2,367.7 312.2,367.7 312.2,367.6 312.2,367.6 312.2,367.6 312.2,367.6 312.2,367.6 312.2,367.6 312.2,367.6 312.1,367.6 312.1,367.6 312.1,367.6 312.1,367.6 312.1,367.6 312.1,367.6 312.1,367.6 312.1,367.6 312.1,367.6 312.1,367.6 312.1,367.6 312.1,367.6 312.1,367.6 312.1,367.6 312.1,367.6 312.0,367.6 312.0,367.6 312.0,367.6 312.0,367.6 312.0,367.6 312.0,367.6 312.0,367.6 312.0,367.6 312.0,367.6 312.0,367.6 312.0,367.6 312.0,367.6 312.0,367.6 311.9,367.6 311.9,367.6 311.9,367.6 311.9,367.6 311.9,367.6 311.9,367.6 311.9,367.6 311.9,367.6 311.9,367.6 311.9,367.6 311.9,367.6 311.9,367.6 311.8,367.6 311.8,367.6 311.8,367.6 311.8,367.6 311.8,367.6 311.8,367.6 311.8,367.6 311.8,367.6 311.8,367.6 311.8,367.6 311.8,367.6 311.7,367.6 311.7,367.6 311.7,367.6 311.7,367.6 311.7,367.6 311.7,367.6 311.7,367.6 311.7,367.6 311.7,367.6 311.7,367.6 311.6,367.6 311.6,367.6 311.6,367.6 311.6,367.6 311.6,367.6 311.6,367.6 311.6,367.6 311.6,367.6 311.6,367.6 311.6,367.6 311.6,367.6 311.5,367.6 311.5,367.6 311.5,367.6 311.5,367.6 311.5,367.6 311.5,367.6 311.5,367.6 311.5,367.6 311.5,367.6 311.5,367.6 311.4,367.6 311.4,367.6 311.4,367.6 311.4,367.6 311.4,367.6 311.4,367.6 311.4,367.6 311.4,367.6 311.4,367.6 311.3,367.6 311.3,367.6 311.3,367.6 311.3,367.6 311.3,367.7 311.3,367.7 311.3,367.7 311.3,367.7 311.3,367.7 311.3,367.7 311.2,367.7 311.2,367.7 311.2,367.7 311.2,367.7 311.2,367.7 311.2,367.7 311.2,367.7 311.2,367.7 311.2,367.7 311.2,367.7 311.1,367.7 311.1,367.7 311.1,367.7 311.1,367.7 311.1,367.7 311.1,367.7 311.1,367.8 311.1,367.8 311.1,367.8 311.1,367.8 311.0,367.8 311.0,367.8 311.0,367.8 311.0,367.8 311.0,367.8 311.0,367.8 311.0,367.8 311.0,367.8 311.0,367.8 311.0,367.8 310.9,367.8 310.9,367.8 310.9,367.8 310.9,367.8 310.9,367.9 310.9,367.9 310.9,367.9 310.9,367.9 310.9,367.9 310.9,367.9 310.8,367.9 310.8,367.9 310.8,367.9 310.8,367.9 310.8,367.9 310.8,367.9 310.8,367.9 310.8,367.9 310.8,367.9 310.8,367.9 310.7,368.0 310.7,368.0 310.7,368.0 310.7,368.0 310.7,368.0 310.7,368.0 310.7,368.0 310.7,368.0 310.7,368.0 310.7,368.0 310.7,368.0 310.6,368.0 310.6,368.0 310.6,368.0 310.6,368.0 310.6,368.1 310.6,368.1 310.6,368.1 310.6,368.1 310.6,368.1 310.6,368.1 310.6,368.1 310.6,368.1 310.5,368.1 310.5,368.1 310.5,368.1 310.5,368.1 310.5,368.1 310.5,368.1 310.5,368.2 310.5,368.2 310.5,368.2 310.5,368.2 310.5,368.2 310.5,368.2 310.4,368.2 310.4,368.2 310.4,368.2 310.4,368.2 310.4,368.2 310.4,368.2 310.4,368.2 310.4,368.2 310.4,368.3 310.4,368.3 310.4,368.3 310.4,368.3 310.4,368.3 310.4,368.3 310.3,368.3 310.3,368.3 310.3,368.3 310.3,368.3 310.3,368.3 310.3,368.3 310.3,368.3 310.3,368.4 310.3,368.4 310.3,368.4 310.3,368.4 310.3,368.4 310.3,368.4 310.3,368.4 310.3,368.4 310.2,368.4 310.2,368.4 310.2,368.4 310.2,368.4 310.2,368.4 310.2,368.4 310.2,368.4 310.2,368.5 310.2,368.5 310.2,368.5 310.2,368.5 310.2,368.5 310.2,368.5 310.2,368.5 310.2,368.5 310.2,368.5 310.2,368.5 310.2,368.5 310.1,368.5 310.1,368.5 310.1,368.5 310.1,368.5 310.1,368.5 310.1,368.5 310.1,368.5 310.1,368.6 310.1,368.6 310.1,368.6 310.1,368.6 310.1,368.6 310.1,368.6 310.1,368.6 310.1,368.6 310.1,368.6 310.1,368.6 310.1,368.6 310.1,368.6 310.1,368.6 310.1,368.6 310.1,368.6 310.1,368.6 310.1,368.6 310.1,368.6 310.1,368.6 310.1,368.6 310.1,368.6 310.1,368.6 310.1,368.6 310.1,368.6 310.1,368.6 310.1,368.6 310.1,368.6 310.1,368.6 310.1,368.6 310.1,368.6 310.1,368.6 310.1,368.6 310.1,368.5 310.1,368.5 310.1,368.5 310.1,368.5 310.1,368.5 310.1,368.5 310.1,368.5 310.1,368.5 310.1,368.5 310.1,368.4 310.1,368.4 310.1,368.4 310.1,368.4 310.1,368.4 310.1,368.4 310.1,368.3 310.1,368.3 310.1,368.3 310.1,368.3 310.1,368.2 310.1,368.2 310.2,368.2 310.2,368.2 310.2,368.1 310.2,368.1 310.2,368.1 310.2,368.0 310.2,368.0 310.2,368.0 310.2,367.9 310.2,367.9 310.3,367.8 310.3,367.8 310.3,367.7 310.3,367.7 310.3,367.6 310.3,367.6 310.3,367.5 310.3,367.5 310.4,367.4 310.4,367.3 310.4,367.3 310.4,367.2 310.4,367.1 310.4,367.1 310.5,367.0 310.5,366.9 310.5,366.8 310.5,366.8 310.5,366.7 310.5,366.6 310.6,366.5 310.6,366.4 310.6,366.3 310.6,366.2 310.6,366.1 310.7,366.0 310.7,365.9 310.7,365.8 310.7,365.7 310.8,365.6 310.8,365.4 310.8,365.3 310.8,365.2 310.8,365.1 310.9,364.9 310.9,364.8 310.9,364.6 310.9,364.5 311.0,364.4 311.0,364.2 311.0,364.1 311.0,363.9 311.1,363.7 311.1,363.6 311.1,363.4 311.1,363.2 311.2,363.1 311.2,362.9 311.2,362.7 311.2,362.5 311.3,362.3 311.3,362.1 311.3,361.9 311.3,361.7 311.4,361.5 311.4,361.3 311.4,361.1 311.4,360.9 311.5,360.7 311.5,360.5 311.5,360.3 311.5,360.0 311.5,359.8 311.6,359.6 311.6,359.3 311.6,359.1 311.6,358.9 311.6,358.6 311.7,358.4 311.7,358.1 311.7,357.9 311.7,357.6 311.7,357.4 311.7,357.1 311.8,356.9 311.8,356.6 311.8,356.4 311.8,356.1 311.8,355.8 311.8,355.6 311.8,355.3 311.8,355.0 311.8,354.8 311.8,354.5 311.8,354.2 311.8,354.0 311.8,353.7 311.8,353.4 311.8,353.1 311.8,352.9 311.8,352.6 311.8,352.3 311.8,352.1 311.8,351.8 311.8,351.5 311.8,351.3 311.8,351.0 311.8,350.7 311.8,350.5 311.8,350.2 311.7,350.0 311.7,349.7 311.7,349.4 311.7,349.2 311.7,348.9 311.6,348.7 311.6,348.5 311.6,348.2 311.6,348.0 311.5,347.7 311.5,347.5 311.5,347.3 311.4,347.1 311.4,346.9 311.4,346.6 311.3,346.4 311.3,346.2 311.3,346.0 311.2,345.8 311.2,345.7 311.1,345.5 311.1,345.3 311.1,345.1 311.0,345.0 311.0,344.8 310.9,344.7 310.9,344.5 310.8,344.4 310.8,344.2 310.7,344.1 310.7,344.0 310.6,343.9 310.6,343.8 310.5,343.7 310.5,343.6 310.4,343.5 310.4,343.4 310.3,343.3 310.3,343.3 310.2,343.2 310.1,343.2 310.1,343.1 310.0,343.1 310.0,343.1 309.9,343.0 309.9,343.0 309.8,343.0 309.7,343.0 309.7,343.0 309.6,343.1 309.6,343.1 309.5,343.1 309.5,343.2 309.4,343.2 309.3,343.3 309.3,343.3 309.2,343.4 309.2,343.5 309.1,343.6 309.1,343.7 309.0,343.8 309.0,343.9 308.9,344.0 308.9,344.1 308.8,344.2 308.8,344.4 308.7,344.5 308.7,344.7 308.6,344.8 308.6,345.0 308.5,345.1 308.5,345.3 308.5,345.5 308.4,345.7 308.4,345.8 308.3,346.0 308.3,346.2 308.3,346.4 308.2,346.6 308.2,346.9 308.2,347.1 308.1,347.3 308.1,347.5 308.1,347.7 308.0,348.0 308.0,348.2 308.0,348.5 308.0,348.7 307.9,348.9 307.9,349.2 307.9,349.4 307.9,349.7 307.9,350.0 307.8,350.2 307.8,350.5 307.8,350.7 307.8,351.0 307.8,351.3 307.8,351.5 307.8,351.8 307.8,352.1 307.8,352.3 307.8,352.6 307.8,352.9 307.8,353.1 307.8,353.4 307.8,353.7 307.8,354.0 307.8,354.2 307.8,354.5 307.8,354.8 307.8,355.0 307.8,355.3 307.8,355.6 307.8,355.8 307.8,356.1 307.8,356.4 307.8,356.6 307.8,356.9 307.9,357.1 307.9,357.4 307.9,357.6 307.9,357.9 307.9,358.1 307.9,358.4 308.0,358.6 308.0,358.9 308.0,359.1 308.0,359.3 308.0,359.6 308.1,359.8 308.1,360.0 308.1,360.3 308.1,360.5 308.1,360.7 308.2,360.9 308.2,361.1 308.2,361.3 308.2,361.5 308.3,361.7 308.3,361.9 308.3,362.1 308.3,362.3 308.4,362.5 308.4,362.7 308.4,362.9 308.4,363.1 308.5,363.2 308.5,363.4 308.5,363.6 308.5,363.7 308.6,363.9 308.6,364.1 308.6,364.2 308.6,364.4 308.7,364.5 308.7,364.6 308.7,364.8 308.7,364.9 308.8,365.1 308.8,365.2 308.8,365.3 308.8,365.4 308.8,365.6 308.9,365.7 308.9,365.8 308.9,365.9 308.9,366.0 309.0,366.1 309.0,366.2 309.0,366.3 309.0,366.4 309.0,366.5 309.1,366.6 309.1,366.7 309.1,366.8 309.1,366.8 309.1,366.9 309.1,367.0 309.2,367.1 309.2,367.1 309.2,367.2 309.2,367.3 309.2,367.3 309.2,367.4 309.3,367.5 309.3,367.5 309.3,367.6 309.3,367.6 309.3,367.7 309.3,367.7 309.3,367.8 309.3,367.8 309.4,367.9 309.4,367.9 309.4,368.0 309.4,368.0 309.4,368.0 309.4,368.1 309.4,368.1 309.4,368.1 309.4,368.2 309.4,368.2 309.5,368.2 309.5,368.2 309.5,368.3 309.5,368.3 309.5,368.3 309.5,368.3 309.5,368.4 309.5,368.4 309.5,368.4 309.5,368.4 309.5,368.4 309.5,368.4 309.5,368.5 309.5,368.5 309.5,368.5 309.5,368.5 309.5,368.5 309.5,368.5 309.5,368.5 309.5,368.5 309.5,368.5 309.5,368.6 309.5,368.6 309.5,368.6 309.5,368.6 309.5,368.6 309.5,368.6 309.5,368.6 309.5,368.6 309.5,368.6 309.5,368.6 309.5,368.6 309.5,368.6 309.5,368.6 309.5,368.6 309.5,368.6 309.5,368.6 309.5,368.6 309.5,368.6 309.5,368.6 309.5,368.6 309.5,368.6 309.5,368.6 309.5,368.6 309.5,368.6 309.5,368.6 309.5,368.6 309.5,368.6 309.5,368.6 309.5,368.6 309.5,368.6 309.5,368.6 309.5,368.6 309.5,368.5 309.5,368.5 309.5,368.5 309.5,368.5 309.5,368.5 309.5,368.5 309.5,368.5 309.4,368.5 309.4,368.5 309.4,368.5 309.4,368.5 309.4,368.5 309.4,368.5 309.4,368.5 309.4,368.5 309.4,368.5 309.4,368.5 309.4,368.5 309.4,368.4 309.4,368.4 309.4,368.4 309.4,368.4 309.4,368.4 309.4,368.4 309.4,368.4 309.3,368.4 309.3,368.4 309.3,368.4 309.3,368.4 309.3,368.4 309.3,368.4 309.3,368.4 309.3,368.4 309.3,368.3 309.3,368.3 309.3,368.3 309.3,368.3 309.3,368.3 309.3,368.3 309.3,368.3 309.2,368.3 309.2,368.3 309.2,368.3 309.2,368.3 309.2,368.3 309.2,368.3 309.2,368.2 309.2,368.2 309.2,368.2 309.2,368.2 309.2,368.2 309.2,368.2 309.2,368.2 309.2,368.2 309.1,368.2 309.1,368.2 309.1,368.2 309.1,368.2 309.1,368.2 309.1,368.2 309.1,368.1 309.1,368.1 309.1,368.1 309.1,368.1 309.1,368.1 309.1,368.1 309.0,368.1 309.0,368.1 309.0,368.1 309.0,368.1 309.0,368.1 309.0,368.1 309.0,368.1 309.0,368.1 309.0,368.0 309.0,368.0 309.0,368.0 309.0,368.0 308.9,368.0 308.9,368.0 308.9,368.0 308.9,368.0 308.9,368.0 308.9,368.0 308.9,368.0 308.9,368.0 308.9,368.0 308.9,368.0 308.9,368.0 308.8,367.9 308.8,367.9 308.8,367.9 308.8,367.9 308.8,367.9 308.8,367.9 308.8,367.9 308.8,367.9 308.8,367.9 308.8,367.9 308.7,367.9 308.7,367.9 308.7,367.9 308.7,367.9 308.7,367.9 308.7,367.9 308.7,367.8 308.7,367.8 308.7,367.8 308.7,367.8 308.6,367.8 308.6,367.8 308.6,367.8 308.6,367.8 308.6,367.8 308.6,367.8 308.6,367.8 308.6,367.8 308.6,367.8 308.6,367.8 308.5,367.8 308.5,367.8 308.5,367.8 308.5,367.8 308.5,367.7 308.5,367.7 308.5,367.7 308.5,367.7 308.5,367.7 308.5,367.7 308.4,367.7 308.4,367.7 308.4,367.7 308.4,367.7 308.4,367.7 308.4,367.7 308.4,367.7 308.4,367.7 308.4,367.7 308.4,367.7 308.3,367.7 308.3,367.7 308.3,367.7 308.3,367.7 308.3,367.7 308.3,367.7 308.3,367.6 308.3,367.6 308.3,367.6 308.3,367.6 308.2,367.6 308.2,367.6 308.2,367.6 308.2,367.6 308.2,367.6 308.2,367.6 308.2,367.6 308.2,367.6 308.2,367.6 308.1,367.6 308.1,367.6 308.1,367.6 308.1,367.6 308.1,367.6 308.1,367.6 308.1,367.6 308.1,367.6 308.1,367.6 308.1,367.6 308.0,367.6 308.0,367.6 308.0,367.6 308.0,367.6 308.0,367.6 308.0,367.6 308.0,367.6 308.0,367.6 308.0,367.6 308.0,367.6 308.0,367.6 307.9,367.6 307.9,367.6 307.9,367.6 307.9,367.6 307.9,367.6 307.9,367.6 307.9,367.6 307.9,367.6 307.9,367.6 307.9,367.6 307.8,367.6 307.8,367.6 307.8,367.6 307.8,367.6 307.8,367.6 307.8,367.6 307.8,367.6 307.8,367.6 307.8,367.6 307.8,367.6 307.8,367.6 307.7,367.6 307.7,367.6 307.7,367.6 307.7,367.6 307.7,367.6 307.7,367.6 307.7,367.6 307.7,367.6 307.7,367.6 307.7,367.6 307.7,367.6 307.7,367.6 307.6,367.6 307.6,367.6 307.6,367.6 307.6,367.6 307.6,367.6 307.6,367.6 307.6,367.6 307.6,367.6 307.6,367.6 307.6,367.6 307.6,367.6 307.6,367.6 307.6,367.6 307.5,367.6 307.5,367.6 307.5,367.6 307.5,367.6 307.5,367.6 307.5,367.6 307.5,367.6 307.5,367.6 307.5,367.6 307.5,367.6 307.5,367.6 307.5,367.6 307.5,367.6 307.5,367.6 307.5,367.6 307.4,367.6 307.4,367.6 307.4,367.6 307.4,367.6 307.4,367.6 307.4,367.6 307.4,367.6 307.4,367.7 307.4,367.7 307.4,367.7 307.4,367.7 307.4,367.7 307.4,367.7 307.4,367.7 307.4,367.7 307.4,367.7 307.4,367.7 307.4,367.7 307.3,367.7 307.3,367.7 307.3,367.7 307.3,367.7 307.3,367.7 307.3,367.7 307.3,367.7 307.3,367.7 307.3,367.7 307.3,367.7 307.3,367.7 307.3,367.8 307.3,367.8 307.3,367.8 307.3,367.8 307.3,367.8 307.3,367.8 307.3,367.8 307.3,367.8 307.3,367.8 307.3,367.8 307.3,367.8 307.3,367.8 307.3,367.8 307.3,367.8 307.3,367.8 307.3,367.8 307.3,367.8 307.3,367.9 307.3,367.9 307.3,367.9 307.3,367.9 307.3,367.9 307.3,367.9 307.3,367.9 307.3,367.9 307.3,367.9 307.3,367.9 307.3,367.9 307.3,367.9 307.3,367.9 307.3,367.9 307.3,367.9 307.3,368.0 307.3,368.0 307.3,368.0 307.3,368.0 307.3,368.0 307.3,368.0 307.3,368.0 307.3,368.0 307.3,368.0 307.3,368.0 307.3,368.0 307.3,368.0 307.3,368.0 307.3,368.1 307.3,368.1 307.3,368.1 307.3,368.1 307.3,368.1 307.3,368.1 307.3,368.1 307.3,368.1 307.3,368.1 307.3,368.1 307.3,368.1 307.3,368.1 307.3,368.1 307.3,368.2 307.3,368.2 307.3,368.2 307.3,368.2 307.3,368.2 307.3,368.2 307.3,368.2 307.3,368.2 307.3,368.2 307.4,368.2 307.4,368.2 307.4,368.2 307.4,368.2 307.4,368.3 307.4,368.3 307.4,368.3 307.4,368.3 307.4,368.3 307.4,368.3 307.4,368.3 307.4,368.3 307.4,368.3 307.4,368.3 307.4,368.3 307.4,368.3 307.4,368.4 307.5,368.4 307.5,368.4 307.5,368.4 307.5,368.4 307.5,368.4 307.5,368.4 307.5,368.4 307.5,368.4 307.5,368.4 307.5,368.4 307.5,368.4 307.5,368.5 307.5,368.5 307.6,368.5 307.6,368.5 307.6,368.5 307.6,368.5 307.6,368.5 307.6,368.5 307.6,368.5 307.6,368.5 307.6,368.5 307.6,368.5 307.7,368.6 307.7,368.6 307.7,368.6 307.7,368.6 307.7,368.6 307.7,368.6 307.7,368.6 307.7,368.6 307.7,368.6 307.7,368.6 307.8,368.6 307.8,368.6 307.8,368.6 307.8,368.7 307.8,368.7 307.8,368.7 307.8,368.7 307.8,368.7 307.8,368.7 307.9,368.7 307.9,368.7 307.9,368.7 307.9,368.7 307.9,368.7 307.9,368.7 307.9,368.7 307.9,368.8 308.0,368.8 308.0,368.8 308.0,368.8 308.0,368.8 308.0,368.8 308.0,368.8 308.0,368.8 308.1,368.8 308.1,368.8 308.1,368.8 308.1,368.8 308.1,368.8 308.1,368.8 308.1,368.9 308.2,368.9 308.2,368.9 308.2,368.9 308.2,368.9 308.2,368.9 308.2,368.9 308.2,368.9 308.3,368.9 308.3,368.9 308.3,368.9 308.3,368.9 308.3,368.9 308.3,368.9 308.4,368.9 308.4,369.0 308.4,369.0 308.4,369.0 308.4,369.0 308.4,369.0 308.4,369.0 308.5,369.0 308.5,369.0 308.5,369.0 308.5,369.0 308.5,369.0 308.5,369.0 308.6,369.0 308.6,369.0 308.6,369.0 308.6,369.0 308.6,369.0 308.6,369.0 308.7,369.0 308.7,369.1 308.7,369.1 308.7,369.1 308.7,369.1 308.8,369.1 308.8,369.1 308.8,369.1 308.8,369.1 308.8,369.1 308.8,369.1 308.9,369.1 308.9,369.1 308.9,369.1 308.9,369.1 308.9,369.1 308.9,369.1 309.0,369.1 309.0,369.1 309.0,369.1 309.0,369.1 309.0,369.1 309.1,369.1 309.1,369.1 309.1,369.1 309.1,369.1 309.1,369.1 309.1,369.2 309.2,369.2 309.2,369.2 309.2,369.2 309.2,369.2 309.2,369.2 309.3,369.2 309.3,369.2 309.3,369.2 309.3,369.2 309.3,369.2 309.4,369.2 309.4,369.2 309.4,369.2 309.4,369.2 309.4,369.2 309.5,369.2 309.5,369.2 309.5,369.2 309.5,369.2 309.5,369.2 309.5,369.2 309.6,369.2 309.6,369.2 309.6,369.2 309.6,369.2 309.6,369.2 309.7,369.2 309.7,369.2 309.7,369.2 309.7,369.2 309.7,369.2 309.8,369.2 309.8,369.2 309.8,369.2 309.8,369.2 309.8,369.2 309.7,369.2 309.7,369.2 309.7,369.2 309.7,369.2 309.7,369.2 309.6,369.2 309.6,369.2 309.6,369.2 309.6,369.2 309.6,369.2 309.5,369.2 309.5,369.2 309.5,369.2 309.5,369.2 309.5,369.2 309.5,369.2 309.4,369.2 309.4,369.2 309.4,369.2 309.4,369.2 309.4,369.2 309.3,369.2 309.3,369.2 309.3,369.2 309.3,369.2 309.3,369.2 309.2,369.2 309.2,369.2 309.2,369.2 309.2,369.2 309.2,369.2 309.1,369.2 309.1,369.3 309.1,369.3 309.1,369.3 309.1,369.3 309.1,369.3 309.0,369.3 309.0,369.3 309.0,369.3 309.0,369.3 309.0,369.3 308.9,369.3 308.9,369.3 308.9,369.3 308.9,369.3 308.9,369.3 308.9,369.3 308.8,369.3 308.8,369.3 308.8,369.3 308.8,369.3 308.8,369.3 308.8,369.3 308.7,369.3 308.7,369.3 308.7,369.3 308.7,369.3 308.7,369.4 308.6,369.4 308.6,369.4 308.6,369.4 308.6,369.4 308.6,369.4 308.6,369.4 308.5,369.4 308.5,369.4 308.5,369.4 308.5,369.4 308.5,369.4 308.5,369.4 308.4,369.4 308.4,369.4 308.4,369.4 308.4,369.4 308.4,369.4 308.4,369.4 308.4,369.5 308.3,369.5 308.3,369.5 308.3,369.5 308.3,369.5 308.3,369.5 308.3,369.5 308.2,369.5 308.2,369.5 308.2,369.5 308.2,369.5 308.2,369.5 308.2,369.5 308.2,369.5 308.1,369.5 308.1,369.6 308.1,369.6 308.1,369.6 308.1,369.6 308.1,369.6 308.1,369.6 308.0,369.6 308.0,369.6 308.0,369.6 308.0,369.6 308.0,369.6 308.0,369.6 308.0,369.6 307.9,369.6 307.9,369.7 307.9,369.7 307.9,369.7 307.9,369.7 307.9,369.7 307.9,369.7 307.9,369.7 307.8,369.7 307.8,369.7 307.8,369.7 307.8,369.7 307.8,369.7 307.8,369.7 307.8,369.8 307.8,369.8 307.8,369.8 307.7,369.8 307.7,369.8 307.7,369.8 307.7,369.8 307.7,369.8 307.7,369.8 307.7,369.8 307.7,369.8 307.7,369.8 307.7,369.8 307.6,369.9 307.6,369.9 307.6,369.9 307.6,369.9 307.6,369.9 307.6,369.9 307.6,369.9 307.6,369.9 307.6,369.9 307.6,369.9 307.5,369.9 307.5,369.9 307.5,370.0 307.5,370.0 307.5,370.0 307.5,370.0 307.5,370.0 307.5,370.0 307.5,370.0 307.5,370.0 307.5,370.0 307.5,370.0 307.5,370.0 307.4,370.0 307.4,370.1 307.4,370.1 307.4,370.1 307.4,370.1 307.4,370.1 307.4,370.1 307.4,370.1 307.4,370.1 307.4,370.1 307.4,370.1 307.4,370.1 307.4,370.1 307.4,370.2 307.4,370.2 307.4,370.2 307.4,370.2 307.3,370.2 307.3,370.2 307.3,370.2 307.3,370.2 307.3,370.2 307.3,370.2 307.3,370.2 307.3,370.2 307.3,370.2 307.3,370.3 307.3,370.3 307.3,370.3 307.3,370.3 307.3,370.3 307.3,370.3 307.3,370.3 307.3,370.3 307.3,370.3 307.3,370.3 307.3,370.3 307.3,370.3 307.3,370.3 307.3,370.4 307.3,370.4 307.3,370.4 307.3,370.4 307.3,370.4 307.3,370.4 307.3,370.4 307.3,370.4 307.3,370.4 307.3,370.4 307.3,370.4 307.3,370.4 307.3,370.4 307.3,370.5 307.3,370.5 307.3,370.5 307.3,370.5 307.3,370.5 307.3,370.5 307.3,370.5 307.3,370.5 307.3,370.5 307.3,370.5 307.3,370.5 307.3,370.5 307.3,370.5 307.3,370.5 307.3,370.5 307.3,370.6 307.3,370.6 307.3,370.6 307.3,370.6 307.3,370.6 307.3,370.6 307.3,370.6 307.3,370.6 307.3,370.6 307.3,370.6 307.3,370.6 307.3,370.6 307.3,370.6 307.3,370.6 307.3,370.6 307.3,370.6 307.3,370.6 307.3,370.7 307.3,370.7 307.3,370.7 307.3,370.7 307.3,370.7 307.3,370.7 307.3,370.7 307.3,370.7 307.3,370.7 307.3,370.7 307.3,370.7 307.4,370.7 307.4,370.7 307.4,370.7 307.4,370.7 307.4,370.7 307.4,370.7 307.4,370.7 307.4,370.7 307.4,370.7 307.4,370.7 307.4,370.7 307.4,370.8 307.4,370.8 307.4,370.8 307.4,370.8 307.4,370.8 307.4,370.8 307.4,370.8 307.5,370.8 307.5,370.8 307.5,370.8 307.5,370.8 307.5,370.8 307.5,370.8 307.5,370.8 307.5,370.8 307.5,370.8 307.5,370.8 307.5,370.8 307.5,370.8 307.5,370.8 307.5,370.8 307.5,370.8 307.6,370.8 307.6,370.8 307.6,370.8 307.6,370.8 307.6,370.8 307.6,370.8 307.6,370.8 307.6,370.8 307.6,370.8 307.6,370.8 307.6,370.8 307.6,370.8 307.6,370.8 307.7,370.8 307.7,370.8 307.7,370.8 307.7,370.8 307.7,370.8 307.7,370.8 307.7,370.8 307.7,370.8 307.7,370.8 307.7,370.8 307.7,370.8 307.7,370.8 307.8,370.8 307.8,370.8 307.8,370.8 307.8,370.8 307.8,370.8 307.8,370.8 307.8,370.8 307.8,370.8 307.8,370.8 307.8,370.8 307.8,370.8 307.9,370.8 307.9,370.8 307.9,370.8 307.9,370.8 307.9,370.8 307.9,370.8 307.9,370.8 307.9,370.8 307.9,370.8 307.9,370.8 308.0,370.8 308.0,370.8 308.0,370.8 308.0,370.8 308.0,370.8 308.0,370.8 308.0,370.8 308.0,370.8 308.0,370.8 308.0,370.8 308.0,370.8 308.1,370.8 308.1,370.8 308.1,370.8 308.1,370.8 308.1,370.8 308.1,370.8 308.1,370.8 308.1,370.8 308.1,370.8 308.1,370.8 308.2,370.8 308.2,370.8 308.2,370.8 308.2,370.8 308.2,370.8 308.2,370.8 308.2,370.8 308.2,370.8 308.2,370.8 308.3,370.8 308.3,370.8 308.3,370.8 308.3,370.8 308.3,370.7 308.3,370.7 308.3,370.7 308.3,370.7 308.3,370.7 308.3,370.7 308.4,370.7 308.4,370.7 308.4,370.7 308.4,370.7 308.4,370.7 308.4,370.7 308.4,370.7 308.4,370.7 308.4,370.7 308.4,370.7 308.5,370.7 308.5,370.7 308.5,370.7 308.5,370.7 308.5,370.7 308.5,370.7 308.5,370.6 308.5,370.6 308.5,370.6 308.5,370.6 308.6,370.6 308.6,370.6 308.6,370.6 308.6,370.6 308.6,370.6 308.6,370.6 308.6,370.6 308.6,370.6 308.6,370.6 308.6,370.6 308.7,370.6 308.7,370.6 308.7,370.6 308.7,370.6 308.7,370.5 308.7,370.5 308.7,370.5 308.7,370.5 308.7,370.5 308.7,370.5 308.8,370.5 308.8,370.5 308.8,370.5 308.8,370.5 308.8,370.5 308.8,370.5 308.8,370.5 308.8,370.5 308.8,370.5 308.8,370.5 308.9,370.4 308.9,370.4 308.9,370.4 308.9,370.4 308.9,370.4 308.9,370.4 308.9,370.4 308.9,370.4 308.9,370.4 308.9,370.4 308.9,370.4 309.0,370.4 309.0,370.4 309.0,370.4 309.0,370.4 309.0,370.3 309.0,370.3 309.0,370.3 309.0,370.3 309.0,370.3 309.0,370.3 309.0,370.3 309.0,370.3 309.1,370.3 309.1,370.3 309.1,370.3 309.1,370.3 309.1,370.3 309.1,370.3 309.1,370.2 309.1,370.2 309.1,370.2 309.1,370.2 309.1,370.2 309.1,370.2 309.2,370.2 309.2,370.2 309.2,370.2 309.2,370.2 309.2,370.2 309.2,370.2 309.2,370.2 309.2,370.2 309.2,370.1 309.2,370.1 309.2,370.1 309.2,370.1 309.2,370.1 309.2,370.1 309.3,370.1 309.3,370.1 309.3,370.1 309.3,370.1 309.3,370.1 309.3,370.1 309.3,370.1 309.3,370.0 309.3,370.0 309.3,370.0 309.3,370.0 309.3,370.0 309.3,370.0 309.3,370.0 309.3,370.0 309.4,370.0 309.4,370.0 309.4,370.0 309.4,370.0 309.4,370.0 309.4,370.0 309.4,370.0 309.4,369.9 309.4,369.9 309.4,369.9 309.4,369.9 309.4,369.9 309.4,369.9 309.4,369.9 309.4,369.9 309.4,369.9 309.4,369.9 309.4,369.9 309.5,369.9 309.5,369.9 309.5,369.9 309.5,369.9 309.5,369.9 309.5,369.9 309.5,369.9 309.5,369.8 309.5,369.8 309.5,369.8 309.5,369.8 309.5,369.8 309.5,369.8 309.5,369.8 309.5,369.8 309.5,369.8 309.5,369.8 309.5,369.8 309.5,369.8 309.5,369.8 309.5,369.8 309.5,369.8 309.5,369.8 309.5,369.8 309.5,369.8 309.5,369.8 309.5,369.8 309.5,369.8 309.5,369.8 309.5,369.8 309.5,369.8 309.5,369.8 309.5,369.8 309.5,369.8 309.5,369.8 309.5,369.8 309.5,369.8 309.5,369.8 309.5,369.8 309.5,369.9 309.5,369.9 309.5,369.9 309.5,369.9 309.5,369.9 309.5,369.9 309.5,369.9 309.5,369.9 309.5,369.9 309.5,370.0 309.5,370.0 309.5,370.0 309.5,370.0 309.5,370.0 309.5,370.0 309.5,370.1 309.5,370.1 309.5,370.1 309.5,370.1 309.5,370.2 309.5,370.2 309.4,370.2 309.4,370.2 309.4,370.3 309.4,370.3 309.4,370.3 309.4,370.4 309.4,370.4 309.4,370.4 309.4,370.5 309.4,370.5 309.3,370.6 309.3,370.6 309.3,370.7 309.3,370.7 309.3,370.8 309.3,370.8 309.3,370.9 309.3,370.9 309.2,371.0 309.2,371.1 309.2,371.1 309.2,371.2 309.2,371.3 309.2,371.3 309.1,371.4 309.1,371.5 309.1,371.6 309.1,371.6 309.1,371.7 309.1,371.8 309.0,371.9 309.0,372.0 309.0,372.1 309.0,372.2 309.0,372.3 308.9,372.4 308.9,372.5 308.9,372.6 308.9,372.7 308.8,372.8 308.8,373.0 308.8,373.1 308.8,373.2 308.8,373.3 308.7,373.5 308.7,373.6 308.7,373.8 308.7,373.9 308.6,374.0 308.6,374.2 308.6,374.3 308.6,374.5 308.5,374.7 308.5,374.8 308.5,375.0 308.5,375.2 308.4,375.3 308.4,375.5 308.4,375.7 308.4,375.9 308.3,376.1 308.3,376.3 308.3,376.5 308.3,376.7 308.2,376.9 308.2,377.1 308.2,377.3 308.2,377.5 308.1,377.7 308.1,377.9 308.1,378.1 308.1,378.4 308.1,378.6 308.0,378.8 308.0,379.1 308.0,379.3 308.0,379.5 308.0,379.8 307.9,380.0 307.9,380.3 307.9,380.5 307.9,380.8 307.9,381.0 307.9,381.3 307.8,381.5 307.8,381.8 307.8,382.0 307.8,382.3 307.8,382.6 307.8,382.8 307.8,383.1 307.8,383.4 307.8,383.6 307.8,383.9 307.8,384.2 307.8,384.4 307.8,384.7 307.8,385.0 307.8,385.3 307.8,385.5 307.8,385.8 307.8,386.1 307.8,386.3 307.8,386.6 307.8,386.9 307.8,387.1 307.8,387.4 307.8,387.7 307.8,387.9 307.8,388.2 307.9,388.4 307.9,388.7 307.9,389.0 307.9,389.2 307.9,389.5 308.0,389.7 308.0,389.9 308.0,390.2 308.0,390.4 308.1,390.7 308.1,390.9 308.1,391.1 308.2,391.3 308.2,391.5 308.2,391.8 308.3,392.0 308.3,392.2 308.3,392.4 308.4,392.6 308.4,392.7 308.5,392.9 308.5,393.1 308.5,393.3 308.6,393.4 308.6,393.6 308.7,393.7 308.7,393.9 308.8,394.0 308.8,394.2 308.9,394.3 308.9,394.4 309.0,394.5 309.0,394.6 309.1,394.7 309.1,394.8 309.2,394.9 309.2,395.0 309.3,395.1 309.3,395.1 309.4,395.2 309.5,395.2 309.5,395.3 309.6,395.3 309.6,395.3 309.7,395.4 309.7,395.4 309.8,395.4 309.9,395.4 309.9,395.4 310.0,395.3 310.0,395.3 310.1,395.3 310.1,395.2 310.2,395.2 310.3,395.1 310.3,395.1 310.4,395.0 310.4,394.9 310.5,394.8 310.5,394.7 310.6,394.6 310.6,394.5 310.7,394.4 310.7,394.3 310.8,394.2 310.8,394.0 310.9,393.9 310.9,393.7 311.0,393.6 311.0,393.4 311.1,393.3 311.1,393.1 311.1,392.9 311.2,392.7 311.2,392.6 311.3,392.4 311.3,392.2 311.3,392.0 311.4,391.8 311.4,391.5 311.4,391.3 311.5,391.1 311.5,390.9 311.5,390.7 311.6,390.4 311.6,390.2 311.6,389.9 311.6,389.7 311.7,389.5 311.7,389.2 311.7,389.0 311.7,388.7 311.7,388.4 311.8,388.2 311.8,387.9 311.8,387.7 311.8,387.4 311.8,387.1 311.8,386.9 311.8,386.6 311.8,386.3 311.8,386.1 311.8,385.8 311.8,385.5 311.8,385.3 311.8,385.0 311.8,384.7 311.8,384.4 311.8,384.2 311.8,383.9 311.8,383.6 311.8,383.4 311.8,383.1 311.8,382.8 311.8,382.6 311.8,382.3 311.8,382.0 311.8,381.8 311.8,381.5 311.7,381.3 311.7,381.0 311.7,380.8 311.7,380.5 311.7,380.3 311.7,380.0 311.6,379.8 311.6,379.5 311.6,379.3 311.6,379.1 311.6,378.8 311.5,378.6 311.5,378.4 311.5,378.1 311.5,377.9 311.5,377.7 311.4,377.5 311.4,377.3 311.4,377.1 311.4,376.9 311.3,376.7 311.3,376.5 311.3,376.3 311.3,376.1 311.2,375.9 311.2,375.7 311.2,375.5 311.2,375.3 311.1,375.2 311.1,375.0 311.1,374.8 311.1,374.7 311.0,374.5 311.0,374.3 311.0,374.2 311.0,374.0 310.9,373.9 310.9,373.8 310.9,373.6 310.9,373.5 310.8,373.3 310.8,373.2 310.8,373.1 310.8,373.0 310.8,372.8 310.7,372.7 310.7,372.6 310.7,372.5 310.7,372.4 310.6,372.3 310.6,372.2 310.6,372.1 310.6,372.0 310.6,371.9 310.5,371.8 310.5,371.7 310.5,371.6 310.5,371.6 310.5,371.5 310.5,371.4 310.4,371.3 310.4,371.3 310.4,371.2 310.4,371.1 310.4,371.1 310.4,371.0 310.3,370.9 310.3,370.9 310.3,370.8 310.3,370.8 310.3,370.7 310.3,370.7 310.3,370.6 310.3,370.6 310.2,370.5 310.2,370.5 310.2,370.4 310.2,370.4 310.2,370.4 310.2,370.3 310.2,370.3 310.2,370.3 310.2,370.2 310.2,370.2 310.1,370.2 310.1,370.2 310.1,370.1 310.1,370.1 310.1,370.1 310.1,370.1 310.1,370.0 310.1,370.0 310.1,370.0 310.1,370.0 310.1,370.0 310.1,370.0 310.1,369.9 310.1,369.9 310.1,369.9 310.1,369.9 310.1,369.9 310.1,369.9 310.1,369.9 310.1,369.9 310.1,369.9 310.1,369.8 310.1,369.8 310.1,369.8 310.1,369.8 310.1,369.8 310.1,369.8 310.1,369.8 310.1,369.8 310.1,369.8 310.1,369.8 310.1,369.8 310.1,369.8 310.1,369.8 310.1,369.8 310.1,369.8 310.1,369.8 310.1,369.8 310.1,369.8 310.1,369.8 310.1,369.8 310.1,369.8 310.1,369.8 310.1,369.8 310.1,369.8 310.1,369.8 310.1,369.8 310.1,369.8 310.1,369.8 310.1,369.8 310.1,369.8 310.1,369.8 310.1,369.8 310.1,369.9 310.1,369.9 310.1,369.9 310.1,369.9 310.1,369.9 310.1,369.9 310.1,369.9 310.2,369.9 310.2,369.9 310.2,369.9 310.2,369.9 310.2,369.9 310.2,369.9 310.2,369.9 310.2,369.9 310.2,369.9 310.2,369.9 310.2,369.9 310.2,370.0 310.2,370.0 310.2,370.0 310.2,370.0 310.2,370.0 310.2,370.0 310.2,370.0 310.3,370.0 310.3,370.0 310.3,370.0 310.3,370.0 310.3,370.0 310.3,370.0 310.3,370.0 310.3,370.0 310.3,370.1 310.3,370.1 310.3,370.1 310.3,370.1 310.3,370.1 310.3,370.1 310.3,370.1 310.4,370.1 310.4,370.1 310.4,370.1 310.4,370.1 310.4,370.1 310.4,370.1 310.4,370.2 310.4,370.2 310.4,370.2 310.4,370.2 310.4,370.2 310.4,370.2 310.4,370.2 310.4,370.2 310.5,370.2 310.5,370.2 310.5,370.2 310.5,370.2 310.5,370.2 310.5,370.2 310.5,370.3 310.5,370.3 310.5,370.3 310.5,370.3 310.5,370.3 310.5,370.3 310.6,370.3 310.6,370.3 310.6,370.3 310.6,370.3 310.6,370.3 310.6,370.3 310.6,370.3 310.6,370.3 310.6,370.4 310.6,370.4 310.6,370.4 310.6,370.4 310.7,370.4 310.7,370.4 310.7,370.4 310.7,370.4 310.7,370.4 310.7,370.4 310.7,370.4 310.7,370.4 310.7,370.4 310.7,370.4 310.7,370.4 310.8,370.5 310.8,370.5 310.8,370.5 310.8,370.5 310.8,370.5 310.8,370.5 310.8,370.5 310.8,370.5 310.8,370.5 310.8,370.5 310.9,370.5 310.9,370.5 310.9,370.5 310.9,370.5 310.9,370.5 310.9,370.5 310.9,370.6 310.9,370.6 310.9,370.6 310.9,370.6 311.0,370.6 311.0,370.6 311.0,370.6 311.0,370.6 311.0,370.6 311.0,370.6 311.0,370.6 311.0,370.6 311.0,370.6 311.0,370.6 311.1,370.6 311.1,370.6 311.1,370.6 311.1,370.6 311.1,370.7 311.1,370.7 311.1,370.7 311.1,370.7 311.1,370.7 311.1,370.7 311.2,370.7 311.2,370.7 311.2,370.7 311.2,370.7 311.2,370.7 311.2,370.7 311.2,370.7 311.2,370.7 311.2,370.7 311.2,370.7 311.3,370.7 311.3,370.7 311.3,370.7 311.3,370.7 311.3,370.7 311.3,370.7 311.3,370.8 311.3,370.8 311.3,370.8 311.3,370.8 311.4,370.8 311.4,370.8 311.4,370.8 311.4,370.8 311.4,370.8 311.4,370.8 311.4,370.8 311.4,370.8 311.4,370.8 311.5,370.8 311.5,370.8 311.5,370.8 311.5,370.8 311.5,370.8 311.5,370.8 311.5,370.8 311.5,370.8 311.5,370.8 311.5,370.8 311.6,370.8 311.6,370.8 311.6,370.8 311.6,370.8 311.6,370.8 311.6,370.8 311.6,370.8 311.6,370.8 311.6,370.8 311.6,370.8 311.6,370.8 311.7,370.8 311.7,370.8 311.7,370.8 311.7,370.8 311.7,370.8 311.7,370.8 311.7,370.8 311.7,370.8 311.7,370.8 311.7,370.8 311.8,370.8 311.8,370.8 311.8,370.8 311.8,370.8 311.8,370.8 311.8,370.8 311.8,370.8 311.8,370.8 311.8,370.8 311.8,370.8 311.8,370.8 311.9,370.8 311.9,370.8 311.9,370.8 311.9,370.8 311.9,370.8 311.9,370.8 311.9,370.8 311.9,370.8 311.9,370.8 311.9,370.8 311.9,370.8 311.9,370.8 312.0,370.8 312.0,370.8 312.0,370.8 312.0,370.8 312.0,370.8 312.0,370.8 312.0,370.8 312.0,370.8 312.0,370.8 312.0,370.8 312.0,370.8 312.0,370.8 312.0,370.8 312.1,370.8 312.1,370.8 312.1,370.8 312.1,370.8 312.1,370.8 312.1,370.8 312.1,370.8 312.1,370.8 312.1,370.8 312.1,370.8 312.1,370.8 312.1,370.8 312.1,370.8 312.1,370.8 312.1,370.8 312.2,370.8 312.2,370.8 312.2,370.8 312.2,370.8 312.2,370.8 312.2,370.8 312.2,370.8 312.2,370.7 312.2,370.7 312.2,370.7 312.2,370.7 312.2,370.7 312.2,370.7 312.2,370.7 312.2,370.7 312.2,370.7 312.2,370.7 312.2,370.7 312.3,370.7 312.3,370.7 312.3,370.7 312.3,370.7 312.3,370.7 312.3,370.7 312.3,370.7 312.3,370.7 312.3,370.7 312.3,370.7 312.3,370.7 312.3,370.6 312.3,370.6 312.3,370.6 312.3,370.6 312.3,370.6 312.3,370.6 312.3,370.6 312.3,370.6 312.3,370.6 312.3,370.6 312.3,370.6 312.3,370.6 312.3,370.6 312.3,370.6 312.3,370.6 312.3,370.6 312.3,370.6 312.3,370.5 312.3,370.5 312.3,370.5 312.3,370.5 312.3,370.5 312.3,370.5 312.3,370.5 312.3,370.5 312.3,370.5 312.3,370.5 312.3,370.5 312.3,370.5 312.3,370.5 312.3,370.5 312.3,370.5 312.3,370.4 312.3,370.4 312.3,370.4 312.3,370.4 312.3,370.4 312.3,370.4 312.3,370.4 312.3,370.4 312.3,370.4 312.3,370.4 312.3,370.4 312.3,370.4 312.3,370.4 312.3,370.3 312.3,370.3 312.3,370.3 312.3,370.3 312.3,370.3 312.3,370.3 312.3,370.3 312.3,370.3 312.3,370.3 312.3,370.3 312.3,370.3 312.3,370.3 312.3,370.3 312.3,370.2 312.3,370.2 312.3,370.2 312.3,370.2 312.3,370.2 312.3,370.2 312.3,370.2 312.3,370.2 312.3,370.2 312.2,370.2 312.2,370.2 312.2,370.2 312.2,370.2 312.2,370.1 312.2,370.1 312.2,370.1 312.2,370.1 312.2,370.1 312.2,370.1 312.2,370.1 312.2,370.1 312.2,370.1 312.2,370.1 312.2,370.1 312.2,370.1 312.2,370.0 312.1,370.0 312.1,370.0 312.1,370.0 312.1,370.0 312.1,370.0 312.1,370.0 312.1,370.0 312.1,370.0 312.1,370.0 312.1,370.0 312.1,370.0 312.1,369.9 312.1,369.9 312.0,369.9 312.0,369.9 312.0,369.9 312.0,369.9 312.0,369.9 312.0,369.9 312.0,369.9 312.0,369.9 312.0,369.9 312.0,369.9 311.9,369.8 311.9,369.8 311.9,369.8 311.9,369.8 311.9,369.8 311.9,369.8 311.9,369.8 311.9,369.8 311.9,369.8 311.9,369.8 311.8,369.8 311.8,369.8 311.8,369.8 311.8,369.7 311.8,369.7 311.8,369.7 311.8,369.7 311.8,369.7 311.8,369.7 311.7,369.7 311.7,369.7 311.7,369.7 311.7,369.7 311.7,369.7 311.7,369.7 311.7,369.7 311.7,369.6 311.6,369.6 311.6,369.6 311.6,369.6 311.6,369.6 311.6,369.6 311.6,369.6 311.6,369.6 311.5,369.6 311.5,369.6 311.5,369.6 311.5,369.6 311.5,369.6 311.5,369.6 311.5,369.5 311.4,369.5 311.4,369.5 311.4,369.5 311.4,369.5 311.4,369.5 311.4,369.5 311.4,369.5 311.3,369.5 311.3,369.5 311.3,369.5 311.3,369.5 311.3,369.5 311.3,369.5 311.2,369.5 311.2,369.4 311.2,369.4 311.2,369.4 311.2,369.4 311.2,369.4 311.2,369.4 311.1,369.4 311.1,369.4 311.1,369.4 311.1,369.4 311.1,369.4 311.1,369.4 311.0,369.4 311.0,369.4 311.0,369.4 311.0,369.4 311.0,369.4 311.0,369.4 310.9,369.4 310.9,369.3 310.9,369.3 310.9,369.3 310.9,369.3 310.8,369.3 310.8,369.3 310.8,369.3 310.8,369.3 310.8,369.3 310.8,369.3 310.7,369.3 310.7,369.3 310.7,369.3 310.7,369.3 310.7,369.3 310.7,369.3 310.6,369.3 310.6,369.3 310.6,369.3 310.6,369.3 310.6,369.3 310.5,369.3 310.5,369.3 310.5,369.3 310.5,369.3 310.5,369.3 310.5,369.2 310.4,369.2 310.4,369.2 310.4,369.2 310.4,369.2 310.4,369.2 310.3,369.2 310.3,369.2 310.3,369.2 310.3,369.2 310.3,369.2 310.2,369.2 310.2,369.2 310.2,369.2 310.2,369.2 310.2,369.2 310.1,369.2 310.1,369.2 310.1,369.2 310.1,369.2 310.1,369.2 310.1,369.2 310.0,369.2 310.0,369.2 310.0,369.2 310.0,369.2 310.0,369.2 309.9,369.2 309.9,369.2 309.9,369.2 309.9,369.2 309.9,369.2 309.8,369.2 309.8,369.2 309.8,369.2"/>
<ellipse cx="309.8" cy="369.2" rx="1.9" ry="5.6" fill="#08088c"/>
<path d="M306.6 366.59999999999997 L313.0 371.8 M313.0 366.59999999999997 L306.6 371.8" stroke="#08088c" stroke-width="1.1"/>
<g font-size="9.8" fill="#000">
<text transform="translate(538.2 373) rotate(0.03) scale(0.876 1)" text-anchor="start">0<tspan font-size="8.6" dy="-0.9">°</tspan></text>
<text transform="translate(534.7 328) rotate(0.03) scale(0.876 1)" text-anchor="start">10<tspan font-size="8.6" dy="-0.9">°</tspan></text>
<text transform="translate(524.4 290) rotate(0.03) scale(0.876 1)" text-anchor="start">20<tspan font-size="8.6" dy="-0.9">°</tspan></text>
<text transform="translate(507.5 254) rotate(0.03) scale(0.876 1)" text-anchor="start">30<tspan font-size="8.6" dy="-0.9">°</tspan></text>
<text transform="translate(484.7 221) rotate(0.03) scale(0.876 1)" text-anchor="start">40<tspan font-size="8.6" dy="-0.9">°</tspan></text>
<text transform="translate(456.5 193) rotate(0.03) scale(0.876 1)" text-anchor="start">50<tspan font-size="8.6" dy="-0.9">°</tspan></text>
<text transform="translate(423.8 170) rotate(0.03) scale(0.876 1)" text-anchor="start">60<tspan font-size="8.6" dy="-0.9">°</tspan></text>
<text transform="translate(387.7 153) rotate(0.03) scale(0.876 1)" text-anchor="start">70<tspan font-size="8.6" dy="-0.9">°</tspan></text>
<text transform="translate(349.1 143) rotate(0.03) scale(0.876 1)" text-anchor="start">80<tspan font-size="8.6" dy="-0.9">°</tspan></text>
<text transform="translate(309.2 139) rotate(0.03) scale(0.876 1)" text-anchor="middle">90<tspan font-size="8.6" dy="-0.9">°</tspan></text>
<text transform="translate(267.5 143) rotate(0.03) scale(0.876 1)" text-anchor="end">100<tspan font-size="8.6" dy="-0.9">°</tspan></text>
<text transform="translate(228.9 153) rotate(0.03) scale(0.876 1)" text-anchor="end">110<tspan font-size="8.6" dy="-0.9">°</tspan></text>
<text transform="translate(192.8 170) rotate(0.03) scale(0.876 1)" text-anchor="end">120<tspan font-size="8.6" dy="-0.9">°</tspan></text>
<text transform="translate(160.1 193) rotate(0.03) scale(0.876 1)" text-anchor="end">130<tspan font-size="8.6" dy="-0.9">°</tspan></text>
<text transform="translate(131.9 221) rotate(0.03) scale(0.876 1)" text-anchor="end">140<tspan font-size="8.6" dy="-0.9">°</tspan></text>
<text transform="translate(109.1 254) rotate(0.03) scale(0.876 1)" text-anchor="end">150<tspan font-size="8.6" dy="-0.9">°</tspan></text>
<text transform="translate(92.2 290) rotate(0.03) scale(0.876 1)" text-anchor="end">160<tspan font-size="8.6" dy="-0.9">°</tspan></text>
<text transform="translate(81.9 328) rotate(0.03) scale(0.876 1)" text-anchor="end">170<tspan font-size="8.6" dy="-0.9">°</tspan></text>
<text transform="translate(78.4 373) rotate(0.03) scale(0.876 1)" text-anchor="end">180<tspan font-size="8.6" dy="-0.9">°</tspan></text>
<text transform="translate(81.9 417) rotate(0.03) scale(0.876 1)" text-anchor="end">190<tspan font-size="8.6" dy="-0.9">°</tspan></text>
<text transform="translate(92.2 456) rotate(0.03) scale(0.876 1)" text-anchor="end">200<tspan font-size="8.6" dy="-0.9">°</tspan></text>
<text transform="translate(109.1 492) rotate(0.03) scale(0.876 1)" text-anchor="end">210<tspan font-size="8.6" dy="-0.9">°</tspan></text>
<text transform="translate(131.9 525) rotate(0.03) scale(0.876 1)" text-anchor="end">220<tspan font-size="8.6" dy="-0.9">°</tspan></text>
<text transform="translate(160.1 553) rotate(0.03) scale(0.876 1)" text-anchor="end">230<tspan font-size="8.6" dy="-0.9">°</tspan></text>
<text transform="translate(192.8 576) rotate(0.03) scale(0.876 1)" text-anchor="end">240<tspan font-size="8.6" dy="-0.9">°</tspan></text>
<text transform="translate(228.9 593) rotate(0.03) scale(0.876 1)" text-anchor="end">250<tspan font-size="8.6" dy="-0.9">°</tspan></text>
<text transform="translate(267.5 603) rotate(0.03) scale(0.876 1)" text-anchor="end">260<tspan font-size="8.6" dy="-0.9">°</tspan></text>
<text transform="translate(309.2 606) rotate(0.03) scale(0.876 1)" text-anchor="middle">270<tspan font-size="8.6" dy="-0.9">°</tspan></text>
<text transform="translate(349.1 603) rotate(0.03) scale(0.876 1)" text-anchor="start">280<tspan font-size="8.6" dy="-0.9">°</tspan></text>
<text transform="translate(387.7 593) rotate(0.03) scale(0.876 1)" text-anchor="start">290<tspan font-size="8.6" dy="-0.9">°</tspan></text>
<text transform="translate(423.8 576) rotate(0.03) scale(0.876 1)" text-anchor="start">300<tspan font-size="8.6" dy="-0.9">°</tspan></text>
<text transform="translate(456.5 553) rotate(0.03) scale(0.876 1)" text-anchor="start">310<tspan font-size="8.6" dy="-0.9">°</tspan></text>
<text transform="translate(484.7 525) rotate(0.03) scale(0.876 1)" text-anchor="start">320<tspan font-size="8.6" dy="-0.9">°</tspan></text>
<text transform="translate(507.5 492) rotate(0.03) scale(0.876 1)" text-anchor="start">330<tspan font-size="8.6" dy="-0.9">°</tspan></text>
<text transform="translate(524.4 456) rotate(0.03) scale(0.876 1)" text-anchor="start">340<tspan font-size="8.6" dy="-0.9">°</tspan></text>
<text transform="translate(534.7 417) rotate(0.03) scale(0.876 1)" text-anchor="start">350<tspan font-size="8.6" dy="-0.9">°</tspan></text>
</g>
<g font-size="10.8" fill="#000" text-anchor="middle">
<text x="354.6" y="386.5">0.2</text>
<text x="399.0" y="386.5">0.4</text>
<text x="443.5" y="386.5">0.6</text>
<text x="487.9" y="386.5">0.8</text>
</g>
</svg>
<span class="t" style="left:217.50px;top:114.53px;font-size:13px;line-height:14.937px;color:#000;transform:scaleX(0.9993);">mom_pattern_pattern_polar_zx</span>
<div class="a" style="left:586.5px;top:162.5px;width:97px;height:34px;background:#fff;border:1px solid #4a4a4a;border-radius:2px;box-shadow:1.5px 1.5px 1.5px rgba(0,0,0,.55);"></div>
<div class="a" style="left:591px;top:166px;width:11px;height:11px;background:#fff;border:1px solid #8a8a8a;border-right-color:#e0e0e0;border-bottom-color:#e0e0e0;box-shadow:inset 1px 1px 0 #555;"></div>
<svg style="left:593px;top:168px" width="8" height="8" viewBox="0 0 8 8"><path d="M0.8 3.2 L3 5.6 L7.2 0.8" fill="none" stroke="#000" stroke-width="1.7"/></svg>
<div class="a" style="left:591px;top:180px;width:11px;height:11px;background:#fff;border:1px solid #8a8a8a;border-right-color:#e0e0e0;border-bottom-color:#e0e0e0;box-shadow:inset 1px 1px 0 #555;"></div>
<svg style="left:593px;top:182px" width="8" height="8" viewBox="0 0 8 8"><path d="M0.8 3.2 L3 5.6 L7.2 0.8" fill="none" stroke="#000" stroke-width="1.7"/></svg>
<div class="a" style="left:603.5px;top:171.7px;width:14.5px;height:2px;background:#ff0000;"></div>
<div class="a" style="left:604px;top:185.5px;width:14px;height:1.3px;background:#5c5cb0;"></div>
<span class="t" style="left:623.50px;top:168.10px;font-size:9.5px;line-height:10.915px;color:#ff0000;transform:scaleX(0.9676);">mag_e_phi</span>
<span class="t" style="left:623.50px;top:181.90px;font-size:9.5px;line-height:10.915px;color:#000090;transform:scaleX(0.9373);">mag_e_theta</span>
</body></html>
